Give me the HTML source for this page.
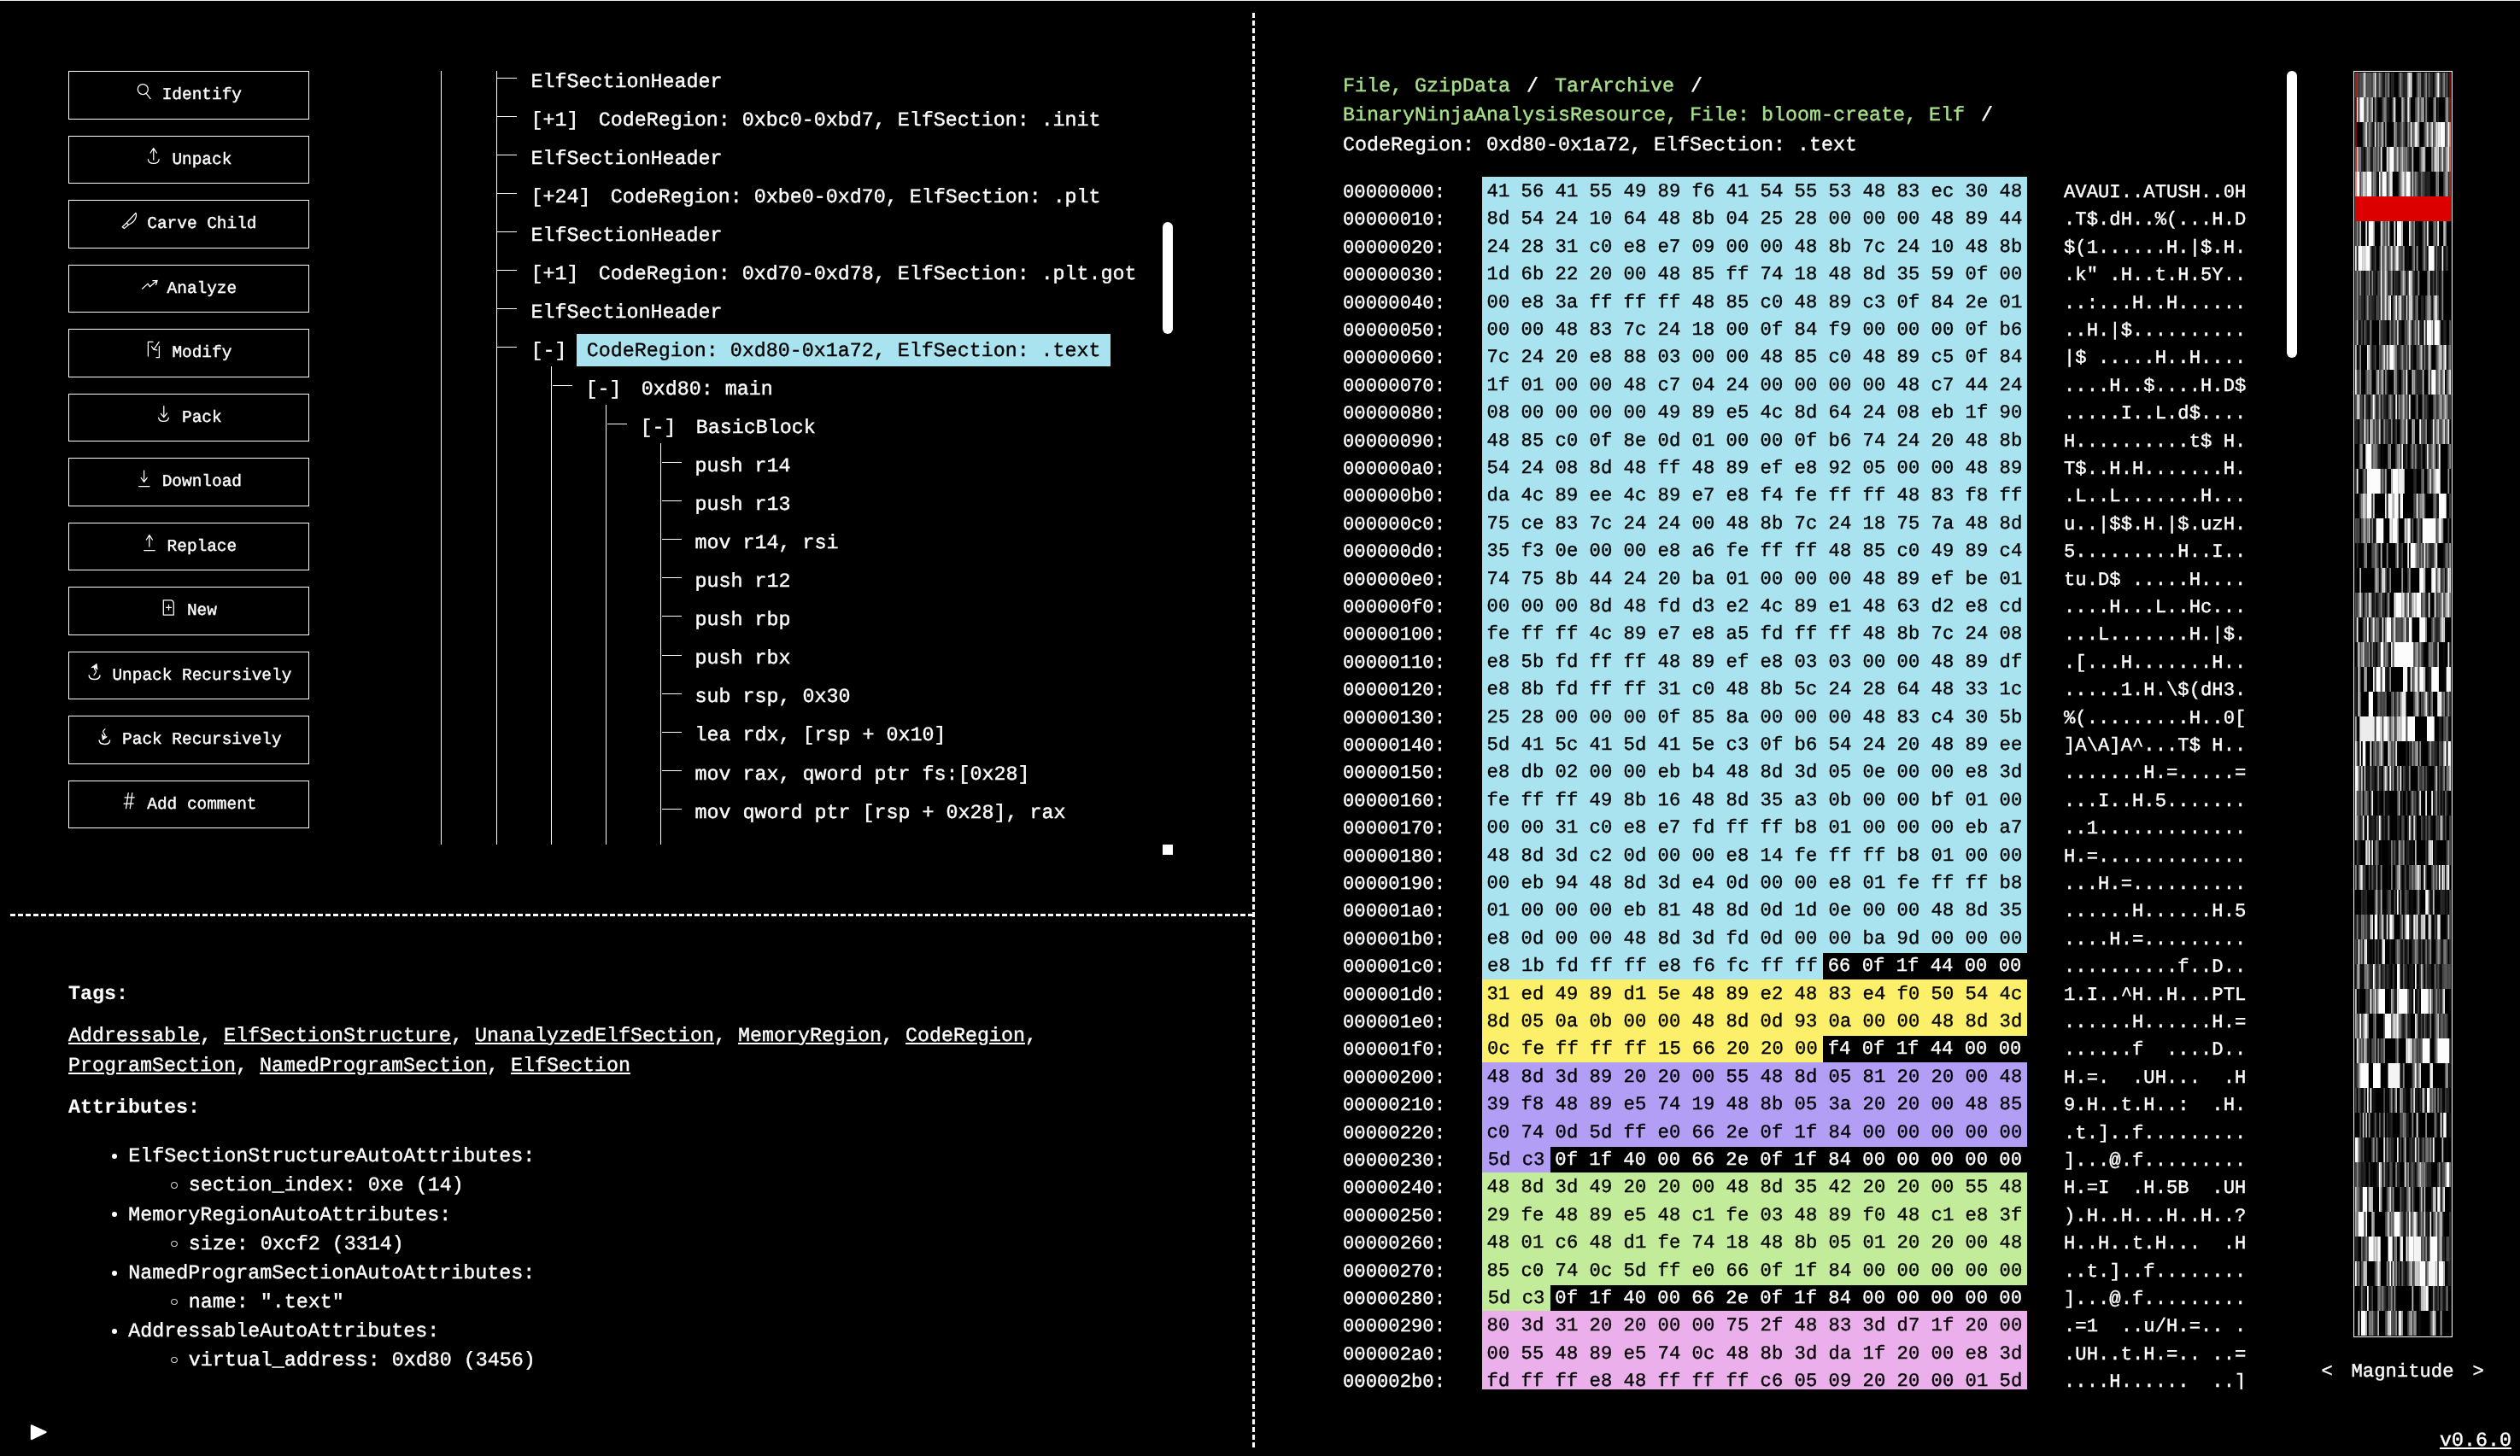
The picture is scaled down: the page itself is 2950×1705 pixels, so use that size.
<!DOCTYPE html>
<html lang="en"><head><meta charset="utf-8"><title>OFRAK</title>
<style>
html,body{margin:0;padding:0;background:#000;}
body{width:2950px;height:1705px;position:relative;overflow:hidden;color:#fff;
 font-family:"Liberation Mono","DejaVu Sans Mono",monospace;font-size:23.33px;
 text-rendering:geometricPrecision;-webkit-font-smoothing:antialiased;-webkit-text-stroke:0.38px;}
.abs{position:absolute;}
#topline{left:0;top:0;width:2950px;height:1px;background:#f2f2f2;}
#vdash{left:1466px;top:15px;width:3px;height:1680px;
 background:repeating-linear-gradient(to bottom,#fff 0,#fff 6px,transparent 6px,transparent 9px);}
#hdash{left:12px;top:1070px;width:1457px;height:3px;
 background:repeating-linear-gradient(to right,#fff 0,#fff 6px,transparent 6px,transparent 9px);}
.btn{position:absolute;left:80px;width:282px;height:57px;box-sizing:border-box;border:1px solid #fff;
 font-size:19.44px;line-height:55px;white-space:pre;display:flex;justify-content:center;align-items:flex-start;}
.btn svg{flex:none;margin-right:11.67px;overflow:visible;position:relative;top:-4.5px}
.btn span{display:block;position:relative;top:-0.5px;left:0.8px}
.btn svg{margin-top:17.5px}
svg.ic{fill:none;stroke:#fff;stroke-width:1.25;stroke-linecap:round;stroke-linejoin:round;}
#tree{left:516px;top:83px;width:860px;height:906px;overflow:hidden;}
.vl{position:absolute;width:1px;background:#fff;}
.tk{position:absolute;height:1px;width:23px;background:#fff;}
.tr{position:absolute;white-space:pre;line-height:45px;height:45px;}
.sel{position:absolute;background:#a8e3ef;color:#000;height:37.5px;line-height:42px;padding:0 11.67px;white-space:pre;overflow:hidden;}
.sb{position:absolute;background:#fff;border-radius:6px;}
#info{left:80px;top:1130px;width:1340px;}
#info .h{font-weight:bold;position:absolute;left:0;white-space:pre;-webkit-text-stroke:0.1px;}
#info .t{position:absolute;left:0;white-space:pre;}
#info u{text-decoration:underline;text-decoration-thickness:2px;text-underline-offset:2px;}
.li{position:absolute;white-space:pre;}
#crumb{left:1572px;top:85px;white-space:pre;line-height:34.4px;}
#crumb .g{color:#a8e08a;}
#crumb i{font-style:normal;margin:0 5px;}
#hex{left:1560px;top:207px;width:1100px;height:1420px;overflow:hidden;font-size:22.22px;}
.hr{position:absolute;left:0;height:32.4px;line-height:32.4px;white-space:pre;width:1100px;}
.hr .a{position:absolute;left:12px;top:3px;}
.hr .b{position:absolute;top:0;width:40px;height:32.5px;text-align:center;color:#fff;box-sizing:border-box;padding-top:4px;line-height:28.4px}
.hr .b.k{color:#000;height:34px;}
.hr .s{position:absolute;left:856px;top:3px;}
.mag{font-size:22.22px;white-space:pre;}
#ver{font-size:23.33px;white-space:pre;text-decoration:underline;text-decoration-thickness:2px;text-underline-offset:1.5px;}
#root{position:absolute;left:0;top:0;width:2950px;height:1705px;will-change:transform;}
</style></head><body><div id="root">
<div id="topline" class="abs"></div>
<div id="vdash" class="abs"></div>
<div id="hdash" class="abs"></div>
<div class="btn" style="top:83px;height:57px"><svg class="ic" width="17.5" height="20" viewBox="0 0 17.5 20"><circle cx="7.3" cy="7.5" r="6"/><path d="M11 12.2 L16.1 18.6"/></svg><span>Identify</span></div>
<div class="btn" style="top:159px;height:56px"><svg class="ic" width="17.5" height="20" viewBox="0 0 17.5 20"><path d="M8.75 14.2V0.6M5.1 6 8.75 0.6 12.4 6M2.4 13.7C2.6 16.8 5 18.4 8.75 18.4 12.5 18.4 14.9 16.8 15.1 13.7"/></svg><span>Unpack</span></div>
<div class="btn" style="top:234px;height:57px"><svg class="ic" width="17.5" height="20" viewBox="0 0 17.5 20"><path d="M1.2 17.8 3.4 19.6 8.5 15.2 6.2 13ZM6.2 13 16.9 1.5 17.4 2.2C17.9 7.6 14.9 12.2 8.5 15.2"/></svg><span>Carve Child</span></div>
<div class="btn" style="top:310px;height:56px"><svg class="ic" width="17.5" height="20" viewBox="0 0 17.5 20"><path d="M0.5 14.2 7.1 8.1 9.5 11.8 18.1 4.3M12.9 4.6 18.1 4.3 16.7 9.4"/></svg><span>Analyze</span></div>
<div class="btn" style="top:385px;height:57px"><svg class="ic" width="17.5" height="20" viewBox="0 0 17.5 20"><path d="M2.4 18V1.4H8M11.9 19.5H15.4V6.5M15.2 1.4 9 10.3M6.6 6.8 9 10.3 12.8 10.8"/></svg><span>Modify</span></div>
<div class="btn" style="top:461px;height:56px"><svg class="ic" width="17.5" height="20" viewBox="0 0 17.5 20"><path d="M8.8 0.6V13.6M5.4 9.3 8.8 13.6 12.5 8.9M2.7 14.1C2.9 17 5.2 18.4 8.5 18.4 11.8 18.4 14.1 17 14.3 14.1"/></svg><span>Pack</span></div>
<div class="btn" style="top:536px;height:57px"><svg class="ic" width="17.5" height="20" viewBox="0 0 17.5 20"><path d="M8.6 1.2V14.4M5.1 9.5 8.6 14.4 12.2 9.5M2.6 19.6H15"/></svg><span>Download</span></div>
<div class="btn" style="top:612px;height:56px"><svg class="ic" width="17.5" height="20" viewBox="0 0 17.5 20"><path d="M8.85 14V0.7M5.4 6 8.85 0.7 12.5 6M2.7 18.5H15.2"/></svg><span>Replace</span></div>
<div class="btn" style="top:687px;height:57px"><svg class="ic" width="17.5" height="20" viewBox="0 0 17.5 20"><path d="M2.3 19.1V1.85H11.4C13.2 2.2 14.2 3.7 14.3 5.8V19.1ZM5.5 10.3H11.5M8.5 7.3V13.3"/></svg><span>New</span></div>
<div class="btn" style="top:763px;height:56px"><svg class="ic" width="17.5" height="20" viewBox="0 0 17.5 20"><path d="M9 13.6C9.6 12.4 11.3 11 11.5 9.5 11.7 8 9.4 6.9 9.4 5.3 9.4 3.8 11 2.2 12 0.8"/><path d="M6.2 4.5 12 0.7 13.1 7 9.6 4.6Z" fill="#fff" stroke-width="0.8"/><path d="M3.2 13.9C3.4 17 5.8 18.45 9.6 18.45 13.4 18.45 15.8 17 16 13.9" stroke-width="1.45"/></svg><span>Unpack Recursively</span></div>
<div class="btn" style="top:838px;height:57px"><svg class="ic" width="17.5" height="20" viewBox="0 0 17.5 20"><path d="M9.9 1.7C9.2 2.9 7.7 3.6 7.7 4.9 7.7 6.4 10 7.6 10.1 9.3 10.2 10.8 8.5 12.6 7.4 14.2"/><path d="M6.4 8.1 7.3 14.4 12.3 10.7 9.3 11Z" fill="#fff" stroke-width="0.8"/><path d="M3.15 14.9C3.3 17.9 5.6 19.4 9.4 19.4 13.2 19.4 15.5 17.9 15.6 14.9" stroke-width="1.45"/></svg><span>Pack Recursively</span></div>
<div class="btn" style="top:914px;height:56px"><svg class="ic" width="17.5" height="20" viewBox="0 0 17.5 20"><path d="M8.2 0.6 5.6 18.6M12.8 0.6 10.3 18.6M4.1 5.85H15.3M3 13.1H14.2"/></svg><span>Add comment</span></div>
<div id="tree" class="abs">
<div class="vl" style="left:0px;top:0px;height:906px"></div><div class="vl" style="left:65px;top:0px;height:906px"></div><div class="vl" style="left:129px;top:346px;height:560px"></div><div class="vl" style="left:193px;top:391px;height:515px"></div><div class="vl" style="left:257px;top:436px;height:470px"></div><div class="tk" style="left:66px;top:8px"></div><div class="tr" style="left:105.5px;top:-8px">ElfSectionHeader</div>
<div class="tk" style="left:66px;top:53px"></div><div class="tr" style="left:105.5px;top:37px">[+1]</div><div class="tr" style="left:184.66999999999996px;top:37px">CodeRegion: 0xbc0-0xbd7, ElfSection: .init</div>
<div class="tk" style="left:66px;top:98px"></div><div class="tr" style="left:105.5px;top:82px">ElfSectionHeader</div>
<div class="tk" style="left:66px;top:143px"></div><div class="tr" style="left:105.5px;top:127px">[+24]</div><div class="tr" style="left:198.66999999999996px;top:127px">CodeRegion: 0xbe0-0xd70, ElfSection: .plt</div>
<div class="tk" style="left:66px;top:188px"></div><div class="tr" style="left:105.5px;top:172px">ElfSectionHeader</div>
<div class="tk" style="left:66px;top:233px"></div><div class="tr" style="left:105.5px;top:217px">[+1]</div><div class="tr" style="left:184.66999999999996px;top:217px">CodeRegion: 0xd70-0xd78, ElfSection: .plt.got</div>
<div class="tk" style="left:66px;top:278px"></div><div class="tr" style="left:105.5px;top:262px">ElfSectionHeader</div>
<div class="tk" style="left:66px;top:323px"></div><div class="tr" style="left:105.5px;top:307px">[-]</div><div class="sel" style="left:159.0px;top:308.2px">CodeRegion: 0xd80-0x1a72, ElfSection: .text</div>
<div class="tk" style="left:131px;top:368px"></div><div class="tr" style="left:169.5px;top:352px">[-]</div><div class="tr" style="left:234.66999999999996px;top:352px">0xd80: main</div>
<div class="tk" style="left:195px;top:413px"></div><div class="tr" style="left:233.5px;top:397px">[-]</div><div class="tr" style="left:298.66999999999996px;top:397px">BasicBlock</div>
<div class="tk" style="left:259px;top:458px"></div><div class="tr" style="left:297.5px;top:442px">push r14</div>
<div class="tk" style="left:259px;top:503px"></div><div class="tr" style="left:297.5px;top:487px">push r13</div>
<div class="tk" style="left:259px;top:548px"></div><div class="tr" style="left:297.5px;top:532px">mov r14, rsi</div>
<div class="tk" style="left:259px;top:593px"></div><div class="tr" style="left:297.5px;top:577px">push r12</div>
<div class="tk" style="left:259px;top:638px"></div><div class="tr" style="left:297.5px;top:622px">push rbp</div>
<div class="tk" style="left:259px;top:684px"></div><div class="tr" style="left:297.5px;top:667px">push rbx</div>
<div class="tk" style="left:259px;top:729px"></div><div class="tr" style="left:297.5px;top:712px">sub rsp, 0x30</div>
<div class="tk" style="left:259px;top:774px"></div><div class="tr" style="left:297.5px;top:757px">lea rdx, [rsp + 0x10]</div>
<div class="tk" style="left:259px;top:819px"></div><div class="tr" style="left:297.5px;top:803px">mov rax, qword ptr fs:[0x28]</div>
<div class="tk" style="left:259px;top:864px"></div><div class="tr" style="left:297.5px;top:848px">mov qword ptr [rsp + 0x28], rax</div>
</div>
<div class="sb" style="left:1361px;top:260px;width:12px;height:131px"></div>
<div class="abs" style="left:1361px;top:989px;width:12px;height:12px;background:#fff"></div>
<div id="info" class="abs">
<div class="h" style="top:22px">Tags:</div>
<div class="t" style="top:70.5px"><u>Addressable</u>, <u>ElfSectionStructure</u>, <u>UnanalyzedElfSection</u>, <u>MemoryRegion</u>, <u>CodeRegion</u>,</div>
<div class="t" style="top:105.5px"><u>ProgramSection</u>, <u>NamedProgramSection</u>, <u>ElfSection</u></div>
<div class="h" style="top:155px">Attributes:</div>
<div class="abs" style="left:51px;top:221.2px;width:6px;height:6px;border-radius:50%;background:#fff"></div><div class="li" style="left:70.19999999999999px;top:212.3px">ElfSectionStructureAutoAttributes:</div>
<div class="abs" style="left:120.3px;top:254.2px;width:7.5px;height:7.5px;box-sizing:border-box;border-radius:50%;border:1.2px solid #fff"></div><div class="li" style="left:140.7px;top:246.4px">section_index: 0xe (14)</div>
<div class="abs" style="left:51px;top:289.4px;width:6px;height:6px;border-radius:50%;background:#fff"></div><div class="li" style="left:70.19999999999999px;top:280.5px">MemoryRegionAutoAttributes:</div>
<div class="abs" style="left:120.3px;top:322.5px;width:7.5px;height:7.5px;box-sizing:border-box;border-radius:50%;border:1.2px solid #fff"></div><div class="li" style="left:140.7px;top:314.6px">size: 0xcf2 (3314)</div>
<div class="abs" style="left:51px;top:357.6px;width:6px;height:6px;border-radius:50%;background:#fff"></div><div class="li" style="left:70.19999999999999px;top:348.7px">NamedProgramSectionAutoAttributes:</div>
<div class="abs" style="left:120.3px;top:390.7px;width:7.5px;height:7.5px;box-sizing:border-box;border-radius:50%;border:1.2px solid #fff"></div><div class="li" style="left:140.7px;top:382.8px">name: &quot;.text&quot;</div>
<div class="abs" style="left:51px;top:425.8px;width:6px;height:6px;border-radius:50%;background:#fff"></div><div class="li" style="left:70.19999999999999px;top:416.9px">AddressableAutoAttributes:</div>
<div class="abs" style="left:120.3px;top:458.8px;width:7.5px;height:7.5px;box-sizing:border-box;border-radius:50%;border:1.2px solid #fff"></div><div class="li" style="left:140.7px;top:451.0px">virtual_address: 0xd80 (3456)</div>
</div>
<svg class="abs" style="left:34px;top:1666px" width="24" height="22" viewBox="0 0 24 22"><path d="M3 3.5 L19.5 11 L3 19 Z" fill="#fff" stroke="#fff" stroke-width="2.4" stroke-linejoin="round"/></svg>
<div id="crumb" class="abs"><span class="g">File, GzipData</span> <i>/</i> <span class="g">TarArchive</span> <i>/</i>
<span class="g">BinaryNinjaAnalysisResource, File: bloom-create, Elf</span> <i>/</i>
CodeRegion: 0xd80-0x1a72, ElfSection: .text</div>
<div id="hex" class="abs">
<div class="hr" style="top:0.0px"><span class="a">00000000:</span><span class="b k" style="left:175.0px;width:637.9px;background:#a8e3ef">41 56 41 55 49 89 f6 41 54 55 53 48 83 ec 30 48</span><span class="s">AVAUI..ATUSH..0H</span></div>
<div class="hr" style="top:32.4px"><span class="a">00000010:</span><span class="b k" style="left:175.0px;width:637.9px;background:#a8e3ef">8d 54 24 10 64 48 8b 04 25 28 00 00 00 48 89 44</span><span class="s">.T$.dH..%(...H.D</span></div>
<div class="hr" style="top:64.8px"><span class="a">00000020:</span><span class="b k" style="left:175.0px;width:637.9px;background:#a8e3ef">24 28 31 c0 e8 e7 09 00 00 48 8b 7c 24 10 48 8b</span><span class="s">$(1......H.|$.H.</span></div>
<div class="hr" style="top:97.2px"><span class="a">00000030:</span><span class="b k" style="left:175.0px;width:637.9px;background:#a8e3ef">1d 6b 22 20 00 48 85 ff 74 18 48 8d 35 59 0f 00</span><span class="s">.k&quot; .H..t.H.5Y..</span></div>
<div class="hr" style="top:129.6px"><span class="a">00000040:</span><span class="b k" style="left:175.0px;width:637.9px;background:#a8e3ef">00 e8 3a ff ff ff 48 85 c0 48 89 c3 0f 84 2e 01</span><span class="s">..:...H..H......</span></div>
<div class="hr" style="top:162.0px"><span class="a">00000050:</span><span class="b k" style="left:175.0px;width:637.9px;background:#a8e3ef">00 00 48 83 7c 24 18 00 0f 84 f9 00 00 00 0f b6</span><span class="s">..H.|$..........</span></div>
<div class="hr" style="top:194.4px"><span class="a">00000060:</span><span class="b k" style="left:175.0px;width:637.9px;background:#a8e3ef">7c 24 20 e8 88 03 00 00 48 85 c0 48 89 c5 0f 84</span><span class="s">|$ .....H..H....</span></div>
<div class="hr" style="top:226.8px"><span class="a">00000070:</span><span class="b k" style="left:175.0px;width:637.9px;background:#a8e3ef">1f 01 00 00 48 c7 04 24 00 00 00 00 48 c7 44 24</span><span class="s">....H..$....H.D$</span></div>
<div class="hr" style="top:259.2px"><span class="a">00000080:</span><span class="b k" style="left:175.0px;width:637.9px;background:#a8e3ef">08 00 00 00 00 49 89 e5 4c 8d 64 24 08 eb 1f 90</span><span class="s">.....I..L.d$....</span></div>
<div class="hr" style="top:291.6px"><span class="a">00000090:</span><span class="b k" style="left:175.0px;width:637.9px;background:#a8e3ef">48 85 c0 0f 8e 0d 01 00 00 0f b6 74 24 20 48 8b</span><span class="s">H..........t$ H.</span></div>
<div class="hr" style="top:324.0px"><span class="a">000000a0:</span><span class="b k" style="left:175.0px;width:637.9px;background:#a8e3ef">54 24 08 8d 48 ff 48 89 ef e8 92 05 00 00 48 89</span><span class="s">T$..H.H.......H.</span></div>
<div class="hr" style="top:356.4px"><span class="a">000000b0:</span><span class="b k" style="left:175.0px;width:637.9px;background:#a8e3ef">da 4c 89 ee 4c 89 e7 e8 f4 fe ff ff 48 83 f8 ff</span><span class="s">.L..L.......H...</span></div>
<div class="hr" style="top:388.8px"><span class="a">000000c0:</span><span class="b k" style="left:175.0px;width:637.9px;background:#a8e3ef">75 ce 83 7c 24 24 00 48 8b 7c 24 18 75 7a 48 8d</span><span class="s">u..|$$.H.|$.uzH.</span></div>
<div class="hr" style="top:421.2px"><span class="a">000000d0:</span><span class="b k" style="left:175.0px;width:637.9px;background:#a8e3ef">35 f3 0e 00 00 e8 a6 fe ff ff 48 85 c0 49 89 c4</span><span class="s">5.........H..I..</span></div>
<div class="hr" style="top:453.6px"><span class="a">000000e0:</span><span class="b k" style="left:175.0px;width:637.9px;background:#a8e3ef">74 75 8b 44 24 20 ba 01 00 00 00 48 89 ef be 01</span><span class="s">tu.D$ .....H....</span></div>
<div class="hr" style="top:486.0px"><span class="a">000000f0:</span><span class="b k" style="left:175.0px;width:637.9px;background:#a8e3ef">00 00 00 8d 48 fd d3 e2 4c 89 e1 48 63 d2 e8 cd</span><span class="s">....H...L..Hc...</span></div>
<div class="hr" style="top:518.4px"><span class="a">00000100:</span><span class="b k" style="left:175.0px;width:637.9px;background:#a8e3ef">fe ff ff 4c 89 e7 e8 a5 fd ff ff 48 8b 7c 24 08</span><span class="s">...L.......H.|$.</span></div>
<div class="hr" style="top:550.8px"><span class="a">00000110:</span><span class="b k" style="left:175.0px;width:637.9px;background:#a8e3ef">e8 5b fd ff ff 48 89 ef e8 03 03 00 00 48 89 df</span><span class="s">.[...H.......H..</span></div>
<div class="hr" style="top:583.2px"><span class="a">00000120:</span><span class="b k" style="left:175.0px;width:637.9px;background:#a8e3ef">e8 8b fd ff ff 31 c0 48 8b 5c 24 28 64 48 33 1c</span><span class="s">.....1.H.\$(dH3.</span></div>
<div class="hr" style="top:615.6px"><span class="a">00000130:</span><span class="b k" style="left:175.0px;width:637.9px;background:#a8e3ef">25 28 00 00 00 0f 85 8a 00 00 00 48 83 c4 30 5b</span><span class="s">%(.........H..0[</span></div>
<div class="hr" style="top:648.0px"><span class="a">00000140:</span><span class="b k" style="left:175.0px;width:637.9px;background:#a8e3ef">5d 41 5c 41 5d 41 5e c3 0f b6 54 24 20 48 89 ee</span><span class="s">]A\A]A^...T$ H..</span></div>
<div class="hr" style="top:680.4px"><span class="a">00000150:</span><span class="b k" style="left:175.0px;width:637.9px;background:#a8e3ef">e8 db 02 00 00 eb b4 48 8d 3d 05 0e 00 00 e8 3d</span><span class="s">.......H.=.....=</span></div>
<div class="hr" style="top:712.8px"><span class="a">00000160:</span><span class="b k" style="left:175.0px;width:637.9px;background:#a8e3ef">fe ff ff 49 8b 16 48 8d 35 a3 0b 00 00 bf 01 00</span><span class="s">...I..H.5.......</span></div>
<div class="hr" style="top:745.2px"><span class="a">00000170:</span><span class="b k" style="left:175.0px;width:637.9px;background:#a8e3ef">00 00 31 c0 e8 e7 fd ff ff b8 01 00 00 00 eb a7</span><span class="s">..1.............</span></div>
<div class="hr" style="top:777.6px"><span class="a">00000180:</span><span class="b k" style="left:175.0px;width:637.9px;background:#a8e3ef">48 8d 3d c2 0d 00 00 e8 14 fe ff ff b8 01 00 00</span><span class="s">H.=.............</span></div>
<div class="hr" style="top:810.0px"><span class="a">00000190:</span><span class="b k" style="left:175.0px;width:637.9px;background:#a8e3ef">00 eb 94 48 8d 3d e4 0d 00 00 e8 01 fe ff ff b8</span><span class="s">...H.=..........</span></div>
<div class="hr" style="top:842.4px"><span class="a">000001a0:</span><span class="b k" style="left:175.0px;width:637.9px;background:#a8e3ef">01 00 00 00 eb 81 48 8d 0d 1d 0e 00 00 48 8d 35</span><span class="s">......H......H.5</span></div>
<div class="hr" style="top:874.8px"><span class="a">000001b0:</span><span class="b k" style="left:175.0px;width:637.9px;background:#a8e3ef">e8 0d 00 00 48 8d 3d fd 0d 00 00 ba 9d 00 00 00</span><span class="s">....H.=.........</span></div>
<div class="hr" style="top:907.2px"><span class="a">000001c0:</span><span class="b k" style="left:175.0px;width:398.8px;background:#a8e3ef">e8 1b fd ff ff e8 f6 fc ff ff</span><span class="b" style="left:573.5px;width:239.1px">66 0f 1f 44 00 00</span><span class="s">..........f..D..</span></div>
<div class="hr" style="top:939.6px"><span class="a">000001d0:</span><span class="b k" style="left:175.0px;width:637.9px;background:#fcef69">31 ed 49 89 d1 5e 48 89 e2 48 83 e4 f0 50 54 4c</span><span class="s">1.I..^H..H...PTL</span></div>
<div class="hr" style="top:972.0px"><span class="a">000001e0:</span><span class="b k" style="left:175.0px;width:637.9px;background:#fcef69">8d 05 0a 0b 00 00 48 8d 0d 93 0a 00 00 48 8d 3d</span><span class="s">......H......H.=</span></div>
<div class="hr" style="top:1004.4px"><span class="a">000001f0:</span><span class="b k" style="left:175.0px;width:398.8px;background:#fcef69">0c fe ff ff ff 15 66 20 20 00</span><span class="b" style="left:573.5px;width:239.1px">f4 0f 1f 44 00 00</span><span class="s">......f  ....D..</span></div>
<div class="hr" style="top:1036.8px"><span class="a">00000200:</span><span class="b k" style="left:175.0px;width:637.9px;background:#b39ef5">48 8d 3d 89 20 20 00 55 48 8d 05 81 20 20 00 48</span><span class="s">H.=.  .UH...  .H</span></div>
<div class="hr" style="top:1069.2px"><span class="a">00000210:</span><span class="b k" style="left:175.0px;width:637.9px;background:#b39ef5">39 f8 48 89 e5 74 19 48 8b 05 3a 20 20 00 48 85</span><span class="s">9.H..t.H..:  .H.</span></div>
<div class="hr" style="top:1101.6px"><span class="a">00000220:</span><span class="b k" style="left:175.0px;width:637.9px;background:#b39ef5">c0 74 0d 5d ff e0 66 2e 0f 1f 84 00 00 00 00 00</span><span class="s">.t.]..f.........</span></div>
<div class="hr" style="top:1134.0px"><span class="a">00000230:</span><span class="b k" style="left:175.0px;width:80.0px;background:#b39ef5">5d c3</span><span class="b" style="left:254.7px;width:557.9px">0f 1f 40 00 66 2e 0f 1f 84 00 00 00 00 00</span><span class="s">]...@.f.........</span></div>
<div class="hr" style="top:1166.4px"><span class="a">00000240:</span><span class="b k" style="left:175.0px;width:637.9px;background:#c3ec9a">48 8d 3d 49 20 20 00 48 8d 35 42 20 20 00 55 48</span><span class="s">H.=I  .H.5B  .UH</span></div>
<div class="hr" style="top:1198.8px"><span class="a">00000250:</span><span class="b k" style="left:175.0px;width:637.9px;background:#c3ec9a">29 fe 48 89 e5 48 c1 fe 03 48 89 f0 48 c1 e8 3f</span><span class="s">).H..H...H..H..?</span></div>
<div class="hr" style="top:1231.2px"><span class="a">00000260:</span><span class="b k" style="left:175.0px;width:637.9px;background:#c3ec9a">48 01 c6 48 d1 fe 74 18 48 8b 05 01 20 20 00 48</span><span class="s">H..H..t.H...  .H</span></div>
<div class="hr" style="top:1263.6px"><span class="a">00000270:</span><span class="b k" style="left:175.0px;width:637.9px;background:#c3ec9a">85 c0 74 0c 5d ff e0 66 0f 1f 84 00 00 00 00 00</span><span class="s">..t.]..f........</span></div>
<div class="hr" style="top:1296.0px"><span class="a">00000280:</span><span class="b k" style="left:175.0px;width:80.0px;background:#c3ec9a">5d c3</span><span class="b" style="left:254.7px;width:557.9px">0f 1f 40 00 66 2e 0f 1f 84 00 00 00 00 00</span><span class="s">]...@.f.........</span></div>
<div class="hr" style="top:1328.4px"><span class="a">00000290:</span><span class="b k" style="left:175.0px;width:637.9px;background:#ebb0eb">80 3d 31 20 20 00 00 75 2f 48 83 3d d7 1f 20 00</span><span class="s">.=1  ..u/H.=.. .</span></div>
<div class="hr" style="top:1360.8px"><span class="a">000002a0:</span><span class="b k" style="left:175.0px;width:637.9px;background:#ebb0eb">00 55 48 89 e5 74 0c 48 8b 3d da 1f 20 00 e8 3d</span><span class="s">.UH..t.H.=.. ..=</span></div>
<div class="hr" style="top:1393.2px"><span class="a">000002b0:</span><span class="b k" style="left:175.0px;width:637.9px;background:#ebb0eb">fd ff ff e8 48 ff ff ff c6 05 09 20 20 00 01 5d</span><span class="s">....H......  ..]</span></div>
</div>
<div class="sb" style="left:2677px;top:83px;width:12px;height:336px"></div>
<div class="abs" style="left:2755px;top:83px;width:116px;height:1483px;box-sizing:border-box;border:1px solid #fff"></div>
<svg class="abs" style="left:2757px;top:85px" width="112" height="1479" viewBox="0 0 112 1479">
<path fill="#0c0c0c" d="M66.5 0h1.75v29.0h-1.75zM108.5 0h1.75v29.0h-1.75zM21 29h1.75v29.0h-1.75zM42 29h1.75v29.0h-1.75zM52.5 29h1.75v29.0h-1.75zM80.5 29h1.75v29.0h-1.75zM0 58h1.75v29.0h-1.75zM21 58h1.75v29.0h-1.75zM33.25 58h1.75v29.0h-1.75zM36.75 58h1.75v29.0h-1.75zM43.75 58h1.75v29.0h-1.75zM59.5 58h1.75v29.0h-1.75zM31.5 87h1.75v29.0h-1.75zM26.25 116h1.75v29.0h-1.75zM92.75 116h1.75v29.0h-1.75zM14 145h1.75v29.0h-1.75zM47.25 145h1.75v29.0h-1.75zM73.5 145h1.75v29.0h-1.75zM7 174h1.75v29.0h-1.75zM40.25 174h1.75v29.0h-1.75zM70 174h1.75v29.0h-1.75zM73.5 174h1.75v29.0h-1.75zM85.75 174h1.75v29.0h-1.75zM98 174h1.75v29.0h-1.75zM19.25 203h1.75v29.0h-1.75zM59.5 203h1.75v29.0h-1.75zM61.25 203h1.75v29.0h-1.75zM70 203h1.75v29.0h-1.75zM73.5 203h1.75v29.0h-1.75zM84 203h1.75v29.0h-1.75zM103.25 203h1.75v29.0h-1.75zM59.5 232h1.75v29.0h-1.75zM70 232h1.75v29.0h-1.75zM87.5 232h1.75v29.0h-1.75zM98 232h1.75v29.0h-1.75zM89.25 261h1.75v29.0h-1.75zM98 261h1.75v29.0h-1.75zM3.5 290h1.75v29.0h-1.75zM14 290h1.75v29.0h-1.75zM66.5 290h1.75v29.0h-1.75zM101.5 290h1.75v29.0h-1.75zM1.75 319h1.75v29.0h-1.75zM19.25 319h1.75v29.0h-1.75zM78.75 319h1.75v29.0h-1.75zM7 348h1.75v29.0h-1.75zM33.25 348h1.75v29.0h-1.75zM43.75 348h1.75v29.0h-1.75zM61.25 348h1.75v29.0h-1.75zM45.5 377h1.75v29.0h-1.75zM64.75 377h1.75v29.0h-1.75zM29.75 406h1.75v29.0h-1.75zM61.25 406h1.75v29.0h-1.75zM85.75 406h1.75v29.0h-1.75zM87.5 406h1.75v29.0h-1.75zM3.5 435h1.75v29.0h-1.75zM31.5 435h1.75v29.0h-1.75zM36.75 435h1.75v29.0h-1.75zM56 435h1.75v29.0h-1.75zM73.5 435h1.75v29.0h-1.75zM94.5 435h1.75v29.0h-1.75zM3.5 464h1.75v29.0h-1.75zM36.75 464h1.75v29.0h-1.75zM50.75 493h1.75v29.0h-1.75zM96.25 493h1.75v29.0h-1.75zM17.5 522h1.75v29.0h-1.75zM77 522h1.75v29.0h-1.75zM8.75 551h1.75v29.0h-1.75zM50.75 551h1.75v29.0h-1.75zM0 580h1.75v29.0h-1.75zM28 580h1.75v29.0h-1.75zM36.75 580h1.75v29.0h-1.75zM56 580h1.75v29.0h-1.75zM105 580h1.75v29.0h-1.75zM8.75 609h1.75v29.0h-1.75zM19.25 609h1.75v29.0h-1.75zM84 609h1.75v29.0h-1.75zM87.5 609h1.75v29.0h-1.75zM3.5 638h1.75v29.0h-1.75zM15.75 638h1.75v29.0h-1.75zM29.75 638h1.75v29.0h-1.75zM105 638h1.75v29.0h-1.75zM40.25 667h1.75v29.0h-1.75zM103.25 667h1.75v29.0h-1.75zM15.75 696h1.75v29.0h-1.75zM36.75 696h1.75v29.0h-1.75zM84 696h1.75v29.0h-1.75zM1.75 725h1.75v29.0h-1.75zM85.75 725h1.75v29.0h-1.75zM1.75 754h1.75v29.0h-1.75zM110.25 754h1.75v29.0h-1.75zM49 783h1.75v29.0h-1.75zM73.5 783h1.75v29.0h-1.75zM77 783h1.75v29.0h-1.75zM8.75 812h1.75v29.0h-1.75zM12.25 812h1.75v29.0h-1.75zM38.5 812h1.75v29.0h-1.75zM59.5 812h1.75v29.0h-1.75zM96.25 812h1.75v29.0h-1.75zM105 812h1.75v29.0h-1.75zM21 841h1.75v29.0h-1.75zM28 841h1.75v29.0h-1.75zM35 841h1.75v29.0h-1.75zM38.5 841h1.75v29.0h-1.75zM77 841h1.75v29.0h-1.75zM10.5 870h1.75v29.0h-1.75zM35 870h1.75v29.0h-1.75zM89.25 870h1.75v29.0h-1.75zM103.25 870h1.75v29.0h-1.75zM5.25 899h1.75v29.0h-1.75zM29.75 899h1.75v29.0h-1.75zM38.5 899h1.75v29.0h-1.75zM40.25 899h1.75v29.0h-1.75zM49 899h1.75v29.0h-1.75zM64.75 899h1.75v29.0h-1.75zM84 899h1.75v29.0h-1.75zM1.75 928h1.75v29.0h-1.75zM22.75 928h1.75v29.0h-1.75zM28 928h1.75v29.0h-1.75zM38.5 928h1.75v29.0h-1.75zM56 928h1.75v29.0h-1.75zM61.25 928h1.75v29.0h-1.75zM42 957h1.75v29.0h-1.75zM64.75 957h1.75v29.0h-1.75zM66.5 957h1.75v29.0h-1.75zM75.25 957h1.75v29.0h-1.75zM87.5 957h1.75v29.0h-1.75zM105 957h1.75v29.0h-1.75zM15.75 986h1.75v29.0h-1.75zM33.25 986h1.75v29.0h-1.75zM38.5 986h1.75v29.0h-1.75zM56 986h1.75v29.0h-1.75zM8.75 1015h1.75v29.0h-1.75zM15.75 1015h1.75v29.0h-1.75zM28 1015h1.75v29.0h-1.75zM42 1015h1.75v29.0h-1.75zM57.75 1015h1.75v29.0h-1.75zM5.25 1044h1.75v29.0h-1.75zM40.25 1044h1.75v29.0h-1.75zM45.5 1044h1.75v29.0h-1.75zM52.5 1044h1.75v29.0h-1.75zM73.5 1044h1.75v29.0h-1.75zM40.25 1073h1.75v29.0h-1.75zM70 1073h1.75v29.0h-1.75zM99.75 1073h1.75v29.0h-1.75zM110.25 1073h1.75v29.0h-1.75zM73.5 1102h1.75v29.0h-1.75zM84 1102h1.75v29.0h-1.75zM50.75 1131h1.75v29.0h-1.75zM52.5 1160h1.75v29.0h-1.75zM108.5 1160h1.75v29.0h-1.75zM7 1189h1.75v29.0h-1.75zM22.75 1189h1.75v29.0h-1.75zM36.75 1189h1.75v29.0h-1.75zM50.75 1189h1.75v29.0h-1.75zM77 1189h1.75v29.0h-1.75zM82.25 1189h1.75v29.0h-1.75zM101.5 1189h1.75v29.0h-1.75zM7 1218h1.75v29.0h-1.75zM10.5 1218h1.75v29.0h-1.75zM14 1218h1.75v29.0h-1.75zM17.5 1218h1.75v29.0h-1.75zM21 1218h1.75v29.0h-1.75zM29.75 1218h1.75v29.0h-1.75zM38.5 1218h1.75v29.0h-1.75zM64.75 1218h1.75v29.0h-1.75zM108.5 1218h1.75v29.0h-1.75zM12.25 1247h1.75v29.0h-1.75zM14 1247h1.75v29.0h-1.75zM22.75 1247h1.75v29.0h-1.75zM26.25 1247h1.75v29.0h-1.75zM59.5 1247h1.75v29.0h-1.75zM75.25 1247h1.75v29.0h-1.75zM92.75 1247h1.75v29.0h-1.75zM103.25 1247h1.75v29.0h-1.75zM106.75 1247h1.75v29.0h-1.75zM19.25 1276h1.75v29.0h-1.75zM70 1276h1.75v29.0h-1.75zM64.75 1305h1.75v29.0h-1.75zM99.75 1305h1.75v29.0h-1.75zM110.25 1305h1.75v29.0h-1.75zM14 1334h1.75v29.0h-1.75zM57.75 1334h1.75v29.0h-1.75zM73.5 1334h1.75v29.0h-1.75zM43.75 1363h1.75v29.0h-1.75zM57.75 1392h1.75v29.0h-1.75zM106.75 1392h1.75v29.0h-1.75zM15.75 1421h1.75v29.0h-1.75zM43.75 1421h1.75v29.0h-1.75zM47.25 1421h1.75v29.0h-1.75zM89.25 1421h1.75v29.0h-1.75zM103.25 1421h1.75v29.0h-1.75zM73.5 1450h1.75v29.0h-1.75zM75.25 1450h1.75v29.0h-1.75zM101.5 1450h1.75v29.0h-1.75z"/>
<path fill="#141414" d="M33.25 0h1.75v29.0h-1.75zM78.75 0h1.75v29.0h-1.75zM64.75 145h1.75v29.0h-1.75zM14 174h1.75v29.0h-1.75zM92.75 203h1.75v29.0h-1.75zM36.75 493h1.75v29.0h-1.75zM64.75 522h1.75v29.0h-1.75zM103.25 551h1.75v29.0h-1.75zM45.5 725h1.75v29.0h-1.75zM105 725h1.75v29.0h-1.75zM15.75 812h1.75v29.0h-1.75zM84 812h1.75v29.0h-1.75zM99.75 812h1.75v29.0h-1.75zM36.75 841h1.75v29.0h-1.75zM91 841h1.75v29.0h-1.75zM96.25 841h1.75v29.0h-1.75zM12.25 870h1.75v29.0h-1.75zM15.75 870h1.75v29.0h-1.75zM17.5 870h1.75v29.0h-1.75zM66.5 870h1.75v29.0h-1.75zM80.5 870h1.75v29.0h-1.75zM84 870h1.75v29.0h-1.75zM47.25 899h1.75v29.0h-1.75zM63 899h1.75v29.0h-1.75zM66.5 899h1.75v29.0h-1.75zM94.5 899h1.75v29.0h-1.75zM59.5 928h1.75v29.0h-1.75zM105 928h1.75v29.0h-1.75zM47.25 957h1.75v29.0h-1.75zM35 986h1.75v29.0h-1.75zM66.5 986h1.75v29.0h-1.75zM73.5 986h1.75v29.0h-1.75zM14 1015h1.75v29.0h-1.75zM19.25 1015h1.75v29.0h-1.75zM29.75 1015h1.75v29.0h-1.75zM54.25 1015h1.75v29.0h-1.75zM75.25 1015h1.75v29.0h-1.75zM0 1044h1.75v29.0h-1.75zM7 1044h1.75v29.0h-1.75zM29.75 1044h1.75v29.0h-1.75zM35 1044h1.75v29.0h-1.75zM54.25 1044h1.75v29.0h-1.75zM63 1044h1.75v29.0h-1.75zM56 1102h1.75v29.0h-1.75zM21 1189h1.75v29.0h-1.75zM24.5 1218h1.75v29.0h-1.75zM73.5 1218h1.75v29.0h-1.75zM110.25 1218h1.75v29.0h-1.75zM24.5 1276h1.75v29.0h-1.75zM63 1276h1.75v29.0h-1.75zM99.75 1276h1.75v29.0h-1.75zM5.25 1421h1.75v29.0h-1.75z"/>
<path fill="#1c1c1c" d="M84 0h1.75v29.0h-1.75zM99.75 0h1.75v29.0h-1.75zM38.5 29h1.75v29.0h-1.75zM84 29h1.75v29.0h-1.75zM24.5 58h1.75v29.0h-1.75zM19.25 87h1.75v29.0h-1.75zM82.25 116h1.75v29.0h-1.75zM71.75 174h1.75v29.0h-1.75zM1.75 203h1.75v29.0h-1.75zM21 203h1.75v29.0h-1.75zM105 203h1.75v29.0h-1.75zM38.5 232h1.75v29.0h-1.75zM71.75 232h1.75v29.0h-1.75zM89.25 232h1.75v29.0h-1.75zM99.75 232h1.75v29.0h-1.75zM68.25 261h1.75v29.0h-1.75zM99.75 261h1.75v29.0h-1.75zM5.25 290h1.75v29.0h-1.75zM15.75 290h1.75v29.0h-1.75zM50.75 290h1.75v29.0h-1.75zM75.25 290h1.75v29.0h-1.75zM3.5 319h1.75v29.0h-1.75zM21 319h1.75v29.0h-1.75zM64.75 319h1.75v29.0h-1.75zM24.5 377h1.75v29.0h-1.75zM29.75 377h1.75v29.0h-1.75zM49 377h1.75v29.0h-1.75zM70 377h1.75v29.0h-1.75zM31.5 406h1.75v29.0h-1.75zM40.25 406h1.75v29.0h-1.75zM45.5 406h1.75v29.0h-1.75zM28 435h1.75v29.0h-1.75zM57.75 435h1.75v29.0h-1.75zM75.25 435h1.75v29.0h-1.75zM21 522h1.75v29.0h-1.75zM52.5 551h1.75v29.0h-1.75zM38.5 580h1.75v29.0h-1.75zM21 609h1.75v29.0h-1.75zM33.25 638h1.75v29.0h-1.75zM110.25 667h1.75v29.0h-1.75zM38.5 696h1.75v29.0h-1.75zM64.75 783h1.75v29.0h-1.75zM14 812h1.75v29.0h-1.75zM61.25 812h1.75v29.0h-1.75zM80.5 812h1.75v29.0h-1.75zM36.75 870h1.75v29.0h-1.75zM8.75 957h1.75v29.0h-1.75zM89.25 957h1.75v29.0h-1.75zM5.25 986h1.75v29.0h-1.75zM59.5 1015h1.75v29.0h-1.75zM80.5 1015h1.75v29.0h-1.75zM84 1015h1.75v29.0h-1.75zM101.5 1015h1.75v29.0h-1.75zM24.5 1044h1.75v29.0h-1.75zM64.75 1044h1.75v29.0h-1.75zM71.75 1073h1.75v29.0h-1.75zM91 1073h1.75v29.0h-1.75zM61.25 1102h1.75v29.0h-1.75zM75.25 1102h1.75v29.0h-1.75zM85.75 1102h1.75v29.0h-1.75zM54.25 1160h1.75v29.0h-1.75zM110.25 1160h1.75v29.0h-1.75zM8.75 1189h1.75v29.0h-1.75zM70 1189h1.75v29.0h-1.75zM98 1189h1.75v29.0h-1.75zM31.5 1218h1.75v29.0h-1.75zM40.25 1218h1.75v29.0h-1.75zM61.25 1218h1.75v29.0h-1.75zM101.5 1218h1.75v29.0h-1.75zM35 1247h1.75v29.0h-1.75zM63 1247h1.75v29.0h-1.75zM71.75 1247h1.75v29.0h-1.75zM77 1247h1.75v29.0h-1.75zM7 1276h1.75v29.0h-1.75zM68.25 1305h1.75v29.0h-1.75zM82.25 1334h1.75v29.0h-1.75zM49 1392h1.75v29.0h-1.75zM59.5 1392h1.75v29.0h-1.75zM17.5 1421h1.75v29.0h-1.75zM94.5 1421h1.75v29.0h-1.75zM105 1421h1.75v29.0h-1.75z"/>
<path fill="#242424" d="M31.5 0h1.75v29.0h-1.75zM42 0h1.75v29.0h-1.75zM56 0h1.75v29.0h-1.75zM77 0h1.75v29.0h-1.75zM87.5 0h1.75v29.0h-1.75zM89.25 0h1.75v29.0h-1.75zM36.75 29h1.75v29.0h-1.75zM57.75 29h1.75v29.0h-1.75zM59.5 29h1.75v29.0h-1.75zM96.25 29h1.75v29.0h-1.75zM110.25 29h1.75v29.0h-1.75zM19.25 58h1.75v29.0h-1.75zM49 58h1.75v29.0h-1.75zM50.75 58h1.75v29.0h-1.75zM57.75 58h1.75v29.0h-1.75zM7 87h1.75v29.0h-1.75zM8.75 87h1.75v29.0h-1.75zM17.5 87h1.75v29.0h-1.75zM63 87h1.75v29.0h-1.75zM64.75 87h1.75v29.0h-1.75zM24.5 116h1.75v29.0h-1.75zM73.5 116h1.75v29.0h-1.75zM84 116h1.75v29.0h-1.75zM19.25 145h1.75v29.0h-1.75zM21 145h1.75v29.0h-1.75zM96.25 203h1.75v29.0h-1.75zM98 203h1.75v29.0h-1.75zM7 232h1.75v29.0h-1.75zM8.75 232h1.75v29.0h-1.75zM21 232h1.75v29.0h-1.75zM22.75 232h1.75v29.0h-1.75zM47.25 232h1.75v29.0h-1.75zM49 232h1.75v29.0h-1.75zM7 261h1.75v29.0h-1.75zM8.75 261h1.75v29.0h-1.75zM19.25 261h1.75v29.0h-1.75zM21 261h1.75v29.0h-1.75zM77 261h1.75v29.0h-1.75zM78.75 261h1.75v29.0h-1.75zM33.25 290h1.75v29.0h-1.75zM35 290h1.75v29.0h-1.75zM52.5 290h1.75v29.0h-1.75zM77 290h1.75v29.0h-1.75zM103.25 290h1.75v29.0h-1.75zM105 290h1.75v29.0h-1.75zM49 319h1.75v29.0h-1.75zM50.75 319h1.75v29.0h-1.75zM57.75 319h1.75v29.0h-1.75zM66.5 319h1.75v29.0h-1.75zM82.25 319h1.75v29.0h-1.75zM84 319h1.75v29.0h-1.75zM49 348h1.75v29.0h-1.75zM71.75 348h1.75v29.0h-1.75zM73.5 348h1.75v29.0h-1.75zM75.25 348h1.75v29.0h-1.75zM77 348h1.75v29.0h-1.75zM12.25 377h1.75v29.0h-1.75zM14 377h1.75v29.0h-1.75zM33.25 377h1.75v29.0h-1.75zM35 377h1.75v29.0h-1.75zM43.75 377h1.75v29.0h-1.75zM84 377h1.75v29.0h-1.75zM0 406h1.75v29.0h-1.75zM1.75 406h1.75v29.0h-1.75zM38.5 406h1.75v29.0h-1.75zM26.25 435h1.75v29.0h-1.75zM71.75 435h1.75v29.0h-1.75zM68.25 464h1.75v29.0h-1.75zM26.25 551h1.75v29.0h-1.75zM87.5 551h1.75v29.0h-1.75zM31.5 609h1.75v29.0h-1.75zM33.25 609h1.75v29.0h-1.75zM82.25 609h1.75v29.0h-1.75zM28 638h1.75v29.0h-1.75zM94.5 638h1.75v29.0h-1.75zM21 667h1.75v29.0h-1.75zM22.75 667h1.75v29.0h-1.75zM38.5 667h1.75v29.0h-1.75zM78.75 667h1.75v29.0h-1.75zM92.75 667h1.75v29.0h-1.75zM94.5 667h1.75v29.0h-1.75zM0 696h1.75v29.0h-1.75zM85.75 696h1.75v29.0h-1.75zM87.5 696h1.75v29.0h-1.75zM0 725h1.75v29.0h-1.75zM98 754h1.75v29.0h-1.75zM99.75 754h1.75v29.0h-1.75zM108.5 754h1.75v29.0h-1.75zM59.5 783h1.75v29.0h-1.75zM92.75 783h1.75v29.0h-1.75zM94.5 783h1.75v29.0h-1.75zM19.25 812h1.75v29.0h-1.75zM21 812h1.75v29.0h-1.75zM24.5 812h1.75v29.0h-1.75zM28 812h1.75v29.0h-1.75zM29.75 812h1.75v29.0h-1.75zM47.25 812h1.75v29.0h-1.75zM50.75 812h1.75v29.0h-1.75zM26.25 841h1.75v29.0h-1.75zM54.25 841h1.75v29.0h-1.75zM106.75 841h1.75v29.0h-1.75zM5.25 870h1.75v29.0h-1.75zM19.25 870h1.75v29.0h-1.75zM21 870h1.75v29.0h-1.75zM49 870h1.75v29.0h-1.75zM50.75 870h1.75v29.0h-1.75zM78.75 870h1.75v29.0h-1.75zM87.5 870h1.75v29.0h-1.75zM98 870h1.75v29.0h-1.75zM3.5 899h1.75v29.0h-1.75zM43.75 899h1.75v29.0h-1.75zM59.5 899h1.75v29.0h-1.75zM92.75 899h1.75v29.0h-1.75zM21 928h1.75v29.0h-1.75zM78.75 928h1.75v29.0h-1.75zM96.25 928h1.75v29.0h-1.75zM10.5 957h1.75v29.0h-1.75zM26.25 957h1.75v29.0h-1.75zM28 957h1.75v29.0h-1.75zM36.75 957h1.75v29.0h-1.75zM61.25 957h1.75v29.0h-1.75zM101.5 957h1.75v29.0h-1.75zM103.25 957h1.75v29.0h-1.75zM106.75 957h1.75v29.0h-1.75zM0 986h1.75v29.0h-1.75zM3.5 986h1.75v29.0h-1.75zM64.75 986h1.75v29.0h-1.75zM94.5 986h1.75v29.0h-1.75zM106.75 986h1.75v29.0h-1.75zM1.75 1015h1.75v29.0h-1.75zM40.25 1015h1.75v29.0h-1.75zM52.5 1015h1.75v29.0h-1.75zM73.5 1015h1.75v29.0h-1.75zM99.75 1015h1.75v29.0h-1.75zM17.5 1044h1.75v29.0h-1.75zM19.25 1044h1.75v29.0h-1.75zM38.5 1044h1.75v29.0h-1.75zM57.75 1044h1.75v29.0h-1.75zM59.5 1044h1.75v29.0h-1.75zM66.5 1044h1.75v29.0h-1.75zM84 1044h1.75v29.0h-1.75zM85.75 1044h1.75v29.0h-1.75zM87.5 1044h1.75v29.0h-1.75zM98 1044h1.75v29.0h-1.75zM3.5 1073h1.75v29.0h-1.75zM45.5 1073h1.75v29.0h-1.75zM47.25 1073h1.75v29.0h-1.75zM63 1073h1.75v29.0h-1.75zM64.75 1073h1.75v29.0h-1.75zM54.25 1102h1.75v29.0h-1.75zM63 1102h1.75v29.0h-1.75zM14 1131h1.75v29.0h-1.75zM15.75 1131h1.75v29.0h-1.75zM28 1131h1.75v29.0h-1.75zM110.25 1131h1.75v29.0h-1.75zM0 1160h1.75v29.0h-1.75zM56 1189h1.75v29.0h-1.75zM57.75 1189h1.75v29.0h-1.75zM71.75 1189h1.75v29.0h-1.75zM75.25 1189h1.75v29.0h-1.75zM106.75 1189h1.75v29.0h-1.75zM108.5 1189h1.75v29.0h-1.75zM42 1218h1.75v29.0h-1.75zM59.5 1218h1.75v29.0h-1.75zM7 1247h1.75v29.0h-1.75zM42 1247h1.75v29.0h-1.75zM43.75 1247h1.75v29.0h-1.75zM66.5 1247h1.75v29.0h-1.75zM80.5 1247h1.75v29.0h-1.75zM8.75 1276h1.75v29.0h-1.75zM35 1276h1.75v29.0h-1.75zM36.75 1276h1.75v29.0h-1.75zM49 1276h1.75v29.0h-1.75zM50.75 1276h1.75v29.0h-1.75zM84 1276h1.75v29.0h-1.75zM85.75 1276h1.75v29.0h-1.75zM87.5 1276h1.75v29.0h-1.75zM5.25 1305h1.75v29.0h-1.75zM7 1305h1.75v29.0h-1.75zM54.25 1305h1.75v29.0h-1.75zM56 1305h1.75v29.0h-1.75zM56 1334h1.75v29.0h-1.75zM84 1334h1.75v29.0h-1.75zM0 1363h1.75v29.0h-1.75zM1.75 1363h1.75v29.0h-1.75zM84 1363h1.75v29.0h-1.75zM85.75 1363h1.75v29.0h-1.75zM101.5 1363h1.75v29.0h-1.75zM103.25 1363h1.75v29.0h-1.75zM108.5 1392h1.75v29.0h-1.75zM110.25 1392h1.75v29.0h-1.75zM8.75 1421h1.75v29.0h-1.75zM10.5 1421h1.75v29.0h-1.75zM35 1421h1.75v29.0h-1.75zM22.75 1450h1.75v29.0h-1.75zM24.5 1450h1.75v29.0h-1.75z"/>
<path fill="#2c2c2c" d="M43.75 0h1.75v29.0h-1.75zM57.75 0h1.75v29.0h-1.75zM24.5 29h1.75v29.0h-1.75zM75.25 116h1.75v29.0h-1.75zM85.75 116h1.75v29.0h-1.75zM68.25 232h1.75v29.0h-1.75zM96.25 232h1.75v29.0h-1.75zM28 261h1.75v29.0h-1.75zM12.25 290h1.75v29.0h-1.75zM42 290h1.75v29.0h-1.75zM36.75 348h1.75v29.0h-1.75zM8.75 406h1.75v29.0h-1.75zM70 464h1.75v29.0h-1.75zM1.75 551h1.75v29.0h-1.75zM89.25 551h1.75v29.0h-1.75zM96.25 638h1.75v29.0h-1.75zM35 696h1.75v29.0h-1.75zM101.5 783h1.75v29.0h-1.75zM57.75 812h1.75v29.0h-1.75zM33.25 870h1.75v29.0h-1.75zM61.25 899h1.75v29.0h-1.75zM12.25 957h1.75v29.0h-1.75zM14 986h1.75v29.0h-1.75zM94.5 1044h1.75v29.0h-1.75zM15.75 1073h1.75v29.0h-1.75zM82.25 1102h1.75v29.0h-1.75zM5.25 1189h1.75v29.0h-1.75zM36.75 1218h1.75v29.0h-1.75zM68.25 1247h1.75v29.0h-1.75zM10.5 1276h1.75v29.0h-1.75zM68.25 1276h1.75v29.0h-1.75zM8.75 1363h1.75v29.0h-1.75zM110.25 1363h1.75v29.0h-1.75zM56 1392h1.75v29.0h-1.75zM92.75 1421h1.75v29.0h-1.75zM101.5 1421h1.75v29.0h-1.75z"/>
<path fill="#343434" d="M24.5 0h1.75v29.0h-1.75zM59.5 0h1.75v29.0h-1.75zM105 0h1.75v29.0h-1.75zM28 87h1.75v29.0h-1.75zM64.75 116h1.75v29.0h-1.75zM80.5 116h1.75v29.0h-1.75zM108.5 116h1.75v29.0h-1.75zM70 145h1.75v29.0h-1.75zM87.5 145h1.75v29.0h-1.75zM82.25 174h1.75v29.0h-1.75zM28 203h1.75v29.0h-1.75zM15.75 261h1.75v29.0h-1.75zM31.5 290h1.75v29.0h-1.75zM61.25 377h1.75v29.0h-1.75zM80.5 377h1.75v29.0h-1.75zM108.5 377h1.75v29.0h-1.75zM89.25 406h1.75v29.0h-1.75zM52.5 435h1.75v29.0h-1.75zM82.25 435h1.75v29.0h-1.75zM0 464h1.75v29.0h-1.75zM33.25 464h1.75v29.0h-1.75zM19.25 493h1.75v29.0h-1.75zM78.75 551h1.75v29.0h-1.75zM91 551h1.75v29.0h-1.75zM108.5 551h1.75v29.0h-1.75zM26.25 609h1.75v29.0h-1.75zM0 638h1.75v29.0h-1.75zM59.5 638h1.75v29.0h-1.75zM98 638h1.75v29.0h-1.75zM1.75 667h1.75v29.0h-1.75zM50.75 725h1.75v29.0h-1.75zM110.25 725h1.75v29.0h-1.75zM89.25 783h1.75v29.0h-1.75zM77 812h1.75v29.0h-1.75zM17.5 841h1.75v29.0h-1.75zM101.5 841h1.75v29.0h-1.75zM61.25 870h1.75v29.0h-1.75zM82.25 899h1.75v29.0h-1.75zM82.25 928h1.75v29.0h-1.75zM7 957h1.75v29.0h-1.75zM99.75 957h1.75v29.0h-1.75zM75.25 986h1.75v29.0h-1.75zM66.5 1015h1.75v29.0h-1.75zM110.25 1015h1.75v29.0h-1.75zM31.5 1044h1.75v29.0h-1.75zM36.75 1044h1.75v29.0h-1.75zM75.25 1044h1.75v29.0h-1.75zM96.25 1073h1.75v29.0h-1.75zM98 1102h1.75v29.0h-1.75zM38.5 1247h1.75v29.0h-1.75zM89.25 1247h1.75v29.0h-1.75zM5.25 1276h1.75v29.0h-1.75zM14 1305h1.75v29.0h-1.75zM89.25 1305h1.75v29.0h-1.75zM110.25 1334h1.75v29.0h-1.75zM42 1392h1.75v29.0h-1.75zM33.25 1421h1.75v29.0h-1.75zM75.25 1421h1.75v29.0h-1.75z"/>
<path fill="#3c3c3c" d="M3.5 29h1.75v29.0h-1.75zM43.75 145h1.75v29.0h-1.75zM54.25 145h1.75v29.0h-1.75zM3.5 174h1.75v29.0h-1.75zM36.75 174h1.75v29.0h-1.75zM94.5 174h1.75v29.0h-1.75zM82.25 203h1.75v29.0h-1.75zM3.5 232h1.75v29.0h-1.75zM28 232h1.75v29.0h-1.75zM45.5 232h1.75v29.0h-1.75zM3.5 261h1.75v29.0h-1.75zM54.25 261h1.75v29.0h-1.75zM29.75 290h1.75v29.0h-1.75zM47.25 290h1.75v29.0h-1.75zM71.75 290h1.75v29.0h-1.75zM82.25 290h1.75v29.0h-1.75zM61.25 319h1.75v29.0h-1.75zM57.75 348h1.75v29.0h-1.75zM87.5 348h1.75v29.0h-1.75zM5.25 377h1.75v29.0h-1.75zM94.5 377h1.75v29.0h-1.75zM24.5 406h1.75v29.0h-1.75zM35 406h1.75v29.0h-1.75zM57.75 406h1.75v29.0h-1.75zM68.25 435h1.75v29.0h-1.75zM12.25 464h1.75v29.0h-1.75zM70 493h1.75v29.0h-1.75zM94.5 493h1.75v29.0h-1.75zM75.25 522h1.75v29.0h-1.75zM99.75 580h1.75v29.0h-1.75zM14 609h1.75v29.0h-1.75zM94.5 609h1.75v29.0h-1.75zM12.25 638h1.75v29.0h-1.75zM28 667h1.75v29.0h-1.75zM5.25 696h1.75v29.0h-1.75zM22.75 696h1.75v29.0h-1.75zM22.75 754h1.75v29.0h-1.75zM45.5 783h1.75v29.0h-1.75zM5.25 812h1.75v29.0h-1.75zM75.25 812h1.75v29.0h-1.75zM101.5 812h1.75v29.0h-1.75zM68.25 841h1.75v29.0h-1.75zM73.5 841h1.75v29.0h-1.75zM7 870h1.75v29.0h-1.75zM26.25 870h1.75v29.0h-1.75zM26.25 899h1.75v29.0h-1.75zM8.75 928h1.75v29.0h-1.75zM92.75 928h1.75v29.0h-1.75zM26.25 1015h1.75v29.0h-1.75zM43.75 1044h1.75v29.0h-1.75zM8.75 1131h1.75v29.0h-1.75zM66.5 1189h1.75v29.0h-1.75zM105 1189h1.75v29.0h-1.75zM94.5 1218h1.75v29.0h-1.75zM56 1247h1.75v29.0h-1.75zM15.75 1276h1.75v29.0h-1.75zM26.25 1276h1.75v29.0h-1.75zM96.25 1276h1.75v29.0h-1.75zM10.5 1334h1.75v29.0h-1.75zM78.75 1334h1.75v29.0h-1.75zM14 1363h1.75v29.0h-1.75zM80.5 1363h1.75v29.0h-1.75z"/>
<path fill="#444444" d="M0 0h1.75v29.0h-1.75zM3.5 0h1.75v29.0h-1.75zM12.25 0h1.75v29.0h-1.75zM54.25 0h1.75v29.0h-1.75zM108.5 29h1.75v29.0h-1.75zM61.25 87h1.75v29.0h-1.75zM1.75 145h1.75v29.0h-1.75zM5.25 145h1.75v29.0h-1.75zM8.75 145h1.75v29.0h-1.75zM22.75 203h1.75v29.0h-1.75zM106.75 203h1.75v29.0h-1.75zM91 232h1.75v29.0h-1.75zM17.5 261h1.75v29.0h-1.75zM7 290h1.75v29.0h-1.75zM22.75 319h1.75v29.0h-1.75zM82.25 377h1.75v29.0h-1.75zM110.25 377h1.75v29.0h-1.75zM47.25 406h1.75v29.0h-1.75zM59.5 435h1.75v29.0h-1.75zM77 435h1.75v29.0h-1.75zM110.25 493h1.75v29.0h-1.75zM1.75 522h1.75v29.0h-1.75zM54.25 551h1.75v29.0h-1.75zM85.75 551h1.75v29.0h-1.75zM22.75 609h1.75v29.0h-1.75zM47.25 638h1.75v29.0h-1.75zM92.75 638h1.75v29.0h-1.75zM91 667h1.75v29.0h-1.75zM29.75 725h1.75v29.0h-1.75zM33.25 725h1.75v29.0h-1.75zM91 783h1.75v29.0h-1.75zM59.5 841h1.75v29.0h-1.75zM56 870h1.75v29.0h-1.75zM1.75 899h1.75v29.0h-1.75zM61.25 1015h1.75v29.0h-1.75zM15.75 1044h1.75v29.0h-1.75zM101.5 1044h1.75v29.0h-1.75zM73.5 1073h1.75v29.0h-1.75zM77 1102h1.75v29.0h-1.75zM103.25 1102h1.75v29.0h-1.75zM106.75 1102h1.75v29.0h-1.75zM71.75 1131h1.75v29.0h-1.75zM75.25 1131h1.75v29.0h-1.75zM0 1189h1.75v29.0h-1.75zM40.25 1247h1.75v29.0h-1.75zM64.75 1247h1.75v29.0h-1.75zM82.25 1276h1.75v29.0h-1.75zM50.75 1392h1.75v29.0h-1.75zM19.25 1421h1.75v29.0h-1.75zM96.25 1421h1.75v29.0h-1.75zM21 1450h1.75v29.0h-1.75z"/>
<path fill="#4c4c4c" d="M7 0h1.75v29.0h-1.75zM19.25 0h1.75v29.0h-1.75zM26.25 0h1.75v29.0h-1.75zM36.75 0h1.75v29.0h-1.75zM50.75 0h1.75v29.0h-1.75zM71.75 0h1.75v29.0h-1.75zM80.5 0h1.75v29.0h-1.75zM92.75 0h1.75v29.0h-1.75zM101.5 0h1.75v29.0h-1.75zM10.5 29h1.75v29.0h-1.75zM15.75 29h1.75v29.0h-1.75zM31.5 29h1.75v29.0h-1.75zM70 29h1.75v29.0h-1.75zM75.25 29h1.75v29.0h-1.75zM91 29h1.75v29.0h-1.75zM105 29h1.75v29.0h-1.75zM8.75 58h1.75v29.0h-1.75zM14 58h1.75v29.0h-1.75zM28 58h1.75v29.0h-1.75zM52.5 58h1.75v29.0h-1.75zM63 58h1.75v29.0h-1.75zM66.5 58h1.75v29.0h-1.75zM80.5 58h1.75v29.0h-1.75zM85.75 58h1.75v29.0h-1.75zM91 58h1.75v29.0h-1.75zM105 58h1.75v29.0h-1.75zM12.25 87h1.75v29.0h-1.75zM24.5 87h1.75v29.0h-1.75zM45.5 87h1.75v29.0h-1.75zM50.75 87h1.75v29.0h-1.75zM75.25 87h1.75v29.0h-1.75zM91 87h1.75v29.0h-1.75zM98 87h1.75v29.0h-1.75zM103.25 87h1.75v29.0h-1.75zM5.25 116h1.75v29.0h-1.75zM19.25 116h1.75v29.0h-1.75zM36.75 116h1.75v29.0h-1.75zM50.75 116h1.75v29.0h-1.75zM68.25 116h1.75v29.0h-1.75zM78.75 116h1.75v29.0h-1.75zM103.25 116h1.75v29.0h-1.75zM22.75 145h1.75v29.0h-1.75zM40.25 145h1.75v29.0h-1.75zM61.25 145h1.75v29.0h-1.75zM66.5 145h1.75v29.0h-1.75zM0 174h1.75v29.0h-1.75zM33.25 174h1.75v29.0h-1.75zM66.5 174h1.75v29.0h-1.75zM78.75 174h1.75v29.0h-1.75zM91 174h1.75v29.0h-1.75zM31.5 203h1.75v29.0h-1.75zM38.5 203h1.75v29.0h-1.75zM43.75 203h1.75v29.0h-1.75zM54.25 203h1.75v29.0h-1.75zM66.5 203h1.75v29.0h-1.75zM78.75 203h1.75v29.0h-1.75zM0 232h1.75v29.0h-1.75zM14 232h1.75v29.0h-1.75zM26.25 232h1.75v29.0h-1.75zM31.5 232h1.75v29.0h-1.75zM40.25 232h1.75v29.0h-1.75zM52.5 232h1.75v29.0h-1.75zM0 261h1.75v29.0h-1.75zM5.25 261h1.75v29.0h-1.75zM12.25 261h1.75v29.0h-1.75zM26.25 261h1.75v29.0h-1.75zM31.5 261h1.75v29.0h-1.75zM36.75 261h1.75v29.0h-1.75zM43.75 261h1.75v29.0h-1.75zM49 261h1.75v29.0h-1.75zM56 261h1.75v29.0h-1.75zM61.25 261h1.75v29.0h-1.75zM70 261h1.75v29.0h-1.75zM82.25 261h1.75v29.0h-1.75zM43.75 290h1.75v29.0h-1.75zM59.5 290h1.75v29.0h-1.75zM68.25 290h1.75v29.0h-1.75zM91 290h1.75v29.0h-1.75zM29.75 319h1.75v29.0h-1.75zM52.5 319h1.75v29.0h-1.75zM73.5 319h1.75v29.0h-1.75zM94.5 319h1.75v29.0h-1.75zM101.5 319h1.75v29.0h-1.75zM108.5 319h1.75v29.0h-1.75zM3.5 348h1.75v29.0h-1.75zM12.25 348h1.75v29.0h-1.75zM28 348h1.75v29.0h-1.75zM54.25 348h1.75v29.0h-1.75zM70 348h1.75v29.0h-1.75zM94.5 348h1.75v29.0h-1.75zM99.75 348h1.75v29.0h-1.75zM106.75 348h1.75v29.0h-1.75zM0 377h1.75v29.0h-1.75zM7 377h1.75v29.0h-1.75zM17.5 377h1.75v29.0h-1.75zM26.25 377h1.75v29.0h-1.75zM38.5 377h1.75v29.0h-1.75zM52.5 377h1.75v29.0h-1.75zM57.75 377h1.75v29.0h-1.75zM91 377h1.75v29.0h-1.75zM96.25 377h1.75v29.0h-1.75zM101.5 377h1.75v29.0h-1.75zM7 406h1.75v29.0h-1.75zM12.25 406h1.75v29.0h-1.75zM21 406h1.75v29.0h-1.75zM36.75 406h1.75v29.0h-1.75zM52.5 406h1.75v29.0h-1.75zM80.5 406h1.75v29.0h-1.75zM92.75 406h1.75v29.0h-1.75zM99.75 406h1.75v29.0h-1.75zM105 406h1.75v29.0h-1.75zM19.25 435h1.75v29.0h-1.75zM47.25 435h1.75v29.0h-1.75zM64.75 435h1.75v29.0h-1.75zM85.75 435h1.75v29.0h-1.75zM87.5 435h1.75v29.0h-1.75zM108.5 435h1.75v29.0h-1.75zM8.75 464h1.75v29.0h-1.75zM29.75 464h1.75v29.0h-1.75zM77 464h1.75v29.0h-1.75zM84 464h1.75v29.0h-1.75zM89.25 464h1.75v29.0h-1.75zM5.25 493h1.75v29.0h-1.75zM68.25 493h1.75v29.0h-1.75zM73.5 493h1.75v29.0h-1.75zM91 493h1.75v29.0h-1.75zM7 522h1.75v29.0h-1.75zM12.25 522h1.75v29.0h-1.75zM71.75 522h1.75v29.0h-1.75zM94.5 522h1.75v29.0h-1.75zM108.5 522h1.75v29.0h-1.75zM19.25 551h1.75v29.0h-1.75zM21 551h1.75v29.0h-1.75zM75.25 551h1.75v29.0h-1.75zM82.25 551h1.75v29.0h-1.75zM105 551h1.75v29.0h-1.75zM61.25 580h1.75v29.0h-1.75zM94.5 580h1.75v29.0h-1.75zM101.5 580h1.75v29.0h-1.75zM1.75 609h1.75v29.0h-1.75zM10.5 609h1.75v29.0h-1.75zM28 609h1.75v29.0h-1.75zM36.75 609h1.75v29.0h-1.75zM57.75 609h1.75v29.0h-1.75zM63 609h1.75v29.0h-1.75zM77 609h1.75v29.0h-1.75zM98 609h1.75v29.0h-1.75zM103.25 609h1.75v29.0h-1.75zM8.75 638h1.75v29.0h-1.75zM17.5 638h1.75v29.0h-1.75zM22.75 638h1.75v29.0h-1.75zM42 638h1.75v29.0h-1.75zM54.25 638h1.75v29.0h-1.75zM61.25 638h1.75v29.0h-1.75zM89.25 638h1.75v29.0h-1.75zM5.25 667h1.75v29.0h-1.75zM14 667h1.75v29.0h-1.75zM26.25 667h1.75v29.0h-1.75zM33.25 667h1.75v29.0h-1.75zM68.25 667h1.75v29.0h-1.75zM73.5 667h1.75v29.0h-1.75zM29.75 696h1.75v29.0h-1.75zM66.5 696h1.75v29.0h-1.75zM73.5 696h1.75v29.0h-1.75zM42 725h1.75v29.0h-1.75zM47.25 725h1.75v29.0h-1.75zM68.25 725h1.75v29.0h-1.75zM78.75 725h1.75v29.0h-1.75zM87.5 725h1.75v29.0h-1.75zM101.5 725h1.75v29.0h-1.75zM106.75 725h1.75v29.0h-1.75zM31.5 754h1.75v29.0h-1.75zM40.25 754h1.75v29.0h-1.75zM45.5 754h1.75v29.0h-1.75zM59.5 754h1.75v29.0h-1.75zM105 754h1.75v29.0h-1.75zM21 783h1.75v29.0h-1.75zM26.25 783h1.75v29.0h-1.75zM42 783h1.75v29.0h-1.75zM63 783h1.75v29.0h-1.75zM68.25 783h1.75v29.0h-1.75zM85.75 783h1.75v29.0h-1.75zM99.75 783h1.75v29.0h-1.75zM42 812h1.75v29.0h-1.75zM56 812h1.75v29.0h-1.75zM82.25 812h1.75v29.0h-1.75zM98 812h1.75v29.0h-1.75zM5.25 841h1.75v29.0h-1.75zM14 841h1.75v29.0h-1.75zM33.25 841h1.75v29.0h-1.75zM49 841h1.75v29.0h-1.75zM64.75 841h1.75v29.0h-1.75zM70 841h1.75v29.0h-1.75zM92.75 841h1.75v29.0h-1.75zM98 841h1.75v29.0h-1.75zM3.5 870h1.75v29.0h-1.75zM24.5 870h1.75v29.0h-1.75zM29.75 870h1.75v29.0h-1.75zM54.25 870h1.75v29.0h-1.75zM64.75 870h1.75v29.0h-1.75zM77 870h1.75v29.0h-1.75zM82.25 870h1.75v29.0h-1.75zM96.25 870h1.75v29.0h-1.75zM105 870h1.75v29.0h-1.75zM110.25 870h1.75v29.0h-1.75zM22.75 899h1.75v29.0h-1.75zM54.25 899h1.75v29.0h-1.75zM106.75 899h1.75v29.0h-1.75zM110.25 899h1.75v29.0h-1.75zM3.5 928h1.75v29.0h-1.75zM10.5 928h1.75v29.0h-1.75zM15.75 928h1.75v29.0h-1.75zM47.25 928h1.75v29.0h-1.75zM52.5 928h1.75v29.0h-1.75zM57.75 928h1.75v29.0h-1.75zM64.75 928h1.75v29.0h-1.75zM68.25 928h1.75v29.0h-1.75zM89.25 928h1.75v29.0h-1.75zM38.5 957h1.75v29.0h-1.75zM40.25 957h1.75v29.0h-1.75zM45.5 957h1.75v29.0h-1.75zM59.5 957h1.75v29.0h-1.75zM71.75 957h1.75v29.0h-1.75zM110.25 957h1.75v29.0h-1.75zM10.5 986h1.75v29.0h-1.75zM28 986h1.75v29.0h-1.75zM52.5 986h1.75v29.0h-1.75zM63 986h1.75v29.0h-1.75zM92.75 986h1.75v29.0h-1.75zM110.25 986h1.75v29.0h-1.75zM0 1015h1.75v29.0h-1.75zM5.25 1015h1.75v29.0h-1.75zM22.75 1015h1.75v29.0h-1.75zM47.25 1015h1.75v29.0h-1.75zM56 1015h1.75v29.0h-1.75zM68.25 1015h1.75v29.0h-1.75zM77 1015h1.75v29.0h-1.75zM85.75 1015h1.75v29.0h-1.75zM94.5 1015h1.75v29.0h-1.75zM106.75 1015h1.75v29.0h-1.75zM26.25 1044h1.75v29.0h-1.75zM33.25 1044h1.75v29.0h-1.75zM78.75 1044h1.75v29.0h-1.75zM96.25 1044h1.75v29.0h-1.75zM108.5 1044h1.75v29.0h-1.75zM110.25 1044h1.75v29.0h-1.75zM12.25 1073h1.75v29.0h-1.75zM14 1073h1.75v29.0h-1.75zM19.25 1073h1.75v29.0h-1.75zM24.5 1073h1.75v29.0h-1.75zM92.75 1073h1.75v29.0h-1.75zM3.5 1102h1.75v29.0h-1.75zM7 1102h1.75v29.0h-1.75zM21 1102h1.75v29.0h-1.75zM57.75 1102h1.75v29.0h-1.75zM92.75 1102h1.75v29.0h-1.75zM5.25 1131h1.75v29.0h-1.75zM21 1131h1.75v29.0h-1.75zM31.5 1131h1.75v29.0h-1.75zM47.25 1131h1.75v29.0h-1.75zM66.5 1131h1.75v29.0h-1.75zM92.75 1131h1.75v29.0h-1.75zM1.75 1160h1.75v29.0h-1.75zM66.5 1160h1.75v29.0h-1.75zM71.75 1160h1.75v29.0h-1.75zM33.25 1189h1.75v29.0h-1.75zM40.25 1189h1.75v29.0h-1.75zM45.5 1189h1.75v29.0h-1.75zM87.5 1189h1.75v29.0h-1.75zM91 1189h1.75v29.0h-1.75zM99.75 1189h1.75v29.0h-1.75zM5.25 1218h1.75v29.0h-1.75zM54.25 1218h1.75v29.0h-1.75zM5.25 1247h1.75v29.0h-1.75zM8.75 1247h1.75v29.0h-1.75zM19.25 1247h1.75v29.0h-1.75zM52.5 1247h1.75v29.0h-1.75zM85.75 1247h1.75v29.0h-1.75zM0 1276h1.75v29.0h-1.75zM3.5 1276h1.75v29.0h-1.75zM42 1276h1.75v29.0h-1.75zM59.5 1276h1.75v29.0h-1.75zM64.75 1276h1.75v29.0h-1.75zM71.75 1276h1.75v29.0h-1.75zM101.5 1276h1.75v29.0h-1.75zM103.25 1276h1.75v29.0h-1.75zM36.75 1305h1.75v29.0h-1.75zM42 1305h1.75v29.0h-1.75zM59.5 1305h1.75v29.0h-1.75zM75.25 1305h1.75v29.0h-1.75zM35 1334h1.75v29.0h-1.75zM40.25 1334h1.75v29.0h-1.75zM61.25 1334h1.75v29.0h-1.75zM64.75 1334h1.75v29.0h-1.75zM75.25 1334h1.75v29.0h-1.75zM91 1334h1.75v29.0h-1.75zM96.25 1334h1.75v29.0h-1.75zM101.5 1334h1.75v29.0h-1.75zM10.5 1363h1.75v29.0h-1.75zM77 1363h1.75v29.0h-1.75zM96.25 1363h1.75v29.0h-1.75zM108.5 1363h1.75v29.0h-1.75zM1.75 1392h1.75v29.0h-1.75zM7 1392h1.75v29.0h-1.75zM22.75 1392h1.75v29.0h-1.75zM38.5 1392h1.75v29.0h-1.75zM45.5 1392h1.75v29.0h-1.75zM61.25 1392h1.75v29.0h-1.75zM66.5 1392h1.75v29.0h-1.75zM82.25 1392h1.75v29.0h-1.75zM96.25 1392h1.75v29.0h-1.75zM29.75 1421h1.75v29.0h-1.75zM40.25 1421h1.75v29.0h-1.75zM35 1450h1.75v29.0h-1.75zM45.5 1450h1.75v29.0h-1.75zM61.25 1450h1.75v29.0h-1.75zM66.5 1450h1.75v29.0h-1.75zM87.5 1450h1.75v29.0h-1.75z"/>
<path fill="#545454" d="M1.75 0h1.75v29.0h-1.75zM5.25 0h1.75v29.0h-1.75zM14 0h1.75v29.0h-1.75zM15.75 0h1.75v29.0h-1.75zM17.5 0h1.75v29.0h-1.75zM29.75 0h1.75v29.0h-1.75zM56 58h1.75v29.0h-1.75zM17.5 145h1.75v29.0h-1.75zM50.75 203h1.75v29.0h-1.75zM52.5 203h1.75v29.0h-1.75zM12.25 232h1.75v29.0h-1.75zM24.5 261h1.75v29.0h-1.75zM57.75 290h1.75v29.0h-1.75zM28 319h1.75v29.0h-1.75zM56 319h1.75v29.0h-1.75zM71.75 319h1.75v29.0h-1.75zM1.75 348h1.75v29.0h-1.75zM5.25 406h1.75v29.0h-1.75zM77 406h1.75v29.0h-1.75zM78.75 406h1.75v29.0h-1.75zM0 522h1.75v29.0h-1.75zM3.5 522h1.75v29.0h-1.75zM0 609h1.75v29.0h-1.75zM49 638h1.75v29.0h-1.75zM50.75 638h1.75v29.0h-1.75zM52.5 638h1.75v29.0h-1.75zM12.25 667h1.75v29.0h-1.75zM77 667h1.75v29.0h-1.75zM77 725h1.75v29.0h-1.75zM103.25 754h1.75v29.0h-1.75zM24.5 783h1.75v29.0h-1.75zM98 783h1.75v29.0h-1.75zM1.75 841h1.75v29.0h-1.75zM3.5 841h1.75v29.0h-1.75zM94.5 870h1.75v29.0h-1.75zM19.25 928h1.75v29.0h-1.75zM63 928h1.75v29.0h-1.75zM57.75 957h1.75v29.0h-1.75zM103.25 1044h1.75v29.0h-1.75zM105 1044h1.75v29.0h-1.75zM106.75 1044h1.75v29.0h-1.75zM19.25 1131h1.75v29.0h-1.75zM29.75 1131h1.75v29.0h-1.75zM40.25 1276h1.75v29.0h-1.75zM54.25 1334h1.75v29.0h-1.75zM106.75 1363h1.75v29.0h-1.75zM38.5 1421h1.75v29.0h-1.75zM42 1450h1.75v29.0h-1.75zM43.75 1450h1.75v29.0h-1.75z"/>
<path fill="#5c5c5c" d="M106.75 0h1.75v29.0h-1.75zM29.75 116h1.75v29.0h-1.75zM71.75 116h1.75v29.0h-1.75zM110.25 116h1.75v29.0h-1.75zM0 145h1.75v29.0h-1.75zM3.5 145h1.75v29.0h-1.75zM7 145h1.75v29.0h-1.75zM10.5 145h1.75v29.0h-1.75zM36.75 203h1.75v29.0h-1.75zM61.25 232h1.75v29.0h-1.75zM84 232h1.75v29.0h-1.75zM91 261h1.75v29.0h-1.75zM0 290h1.75v29.0h-1.75zM110.25 290h1.75v29.0h-1.75zM35 319h1.75v29.0h-1.75zM26.25 406h1.75v29.0h-1.75zM98 406h1.75v29.0h-1.75zM96.25 435h1.75v29.0h-1.75zM80.5 493h1.75v29.0h-1.75zM47.25 551h1.75v29.0h-1.75zM29.75 580h1.75v29.0h-1.75zM106.75 580h1.75v29.0h-1.75zM96.25 609h1.75v29.0h-1.75zM10.5 667h1.75v29.0h-1.75zM43.75 667h1.75v29.0h-1.75zM5.25 725h1.75v29.0h-1.75zM26.25 725h1.75v29.0h-1.75zM28 725h1.75v29.0h-1.75zM31.5 725h1.75v29.0h-1.75zM35 725h1.75v29.0h-1.75zM1.75 783h1.75v29.0h-1.75zM92.75 812h1.75v29.0h-1.75zM105 841h1.75v29.0h-1.75zM70 870h1.75v29.0h-1.75zM45.5 899h1.75v29.0h-1.75zM22.75 957h1.75v29.0h-1.75zM82.25 1044h1.75v29.0h-1.75zM98 1073h1.75v29.0h-1.75zM33.25 1102h1.75v29.0h-1.75zM99.75 1102h1.75v29.0h-1.75zM101.5 1102h1.75v29.0h-1.75zM105 1102h1.75v29.0h-1.75zM73.5 1131h1.75v29.0h-1.75zM77 1131h1.75v29.0h-1.75zM105 1160h1.75v29.0h-1.75zM80.5 1189h1.75v29.0h-1.75zM22.75 1218h1.75v29.0h-1.75zM52.5 1218h1.75v29.0h-1.75z"/>
<path fill="#646464" d="M35 0h1.75v29.0h-1.75zM17.5 58h1.75v29.0h-1.75zM105 87h1.75v29.0h-1.75zM77 116h1.75v29.0h-1.75zM17.5 203h1.75v29.0h-1.75zM94.5 203h1.75v29.0h-1.75zM66.5 232h1.75v29.0h-1.75zM94.5 232h1.75v29.0h-1.75zM96.25 261h1.75v29.0h-1.75zM10.5 290h1.75v29.0h-1.75zM17.5 319h1.75v29.0h-1.75zM38.5 319h1.75v29.0h-1.75zM42 377h1.75v29.0h-1.75zM66.5 522h1.75v29.0h-1.75zM35 580h1.75v29.0h-1.75zM64.75 609h1.75v29.0h-1.75zM26.25 638h1.75v29.0h-1.75zM47.25 754h1.75v29.0h-1.75zM17.5 812h1.75v29.0h-1.75zM85.75 870h1.75v29.0h-1.75zM52.5 899h1.75v29.0h-1.75zM85.75 957h1.75v29.0h-1.75zM12.25 986h1.75v29.0h-1.75zM56 1044h1.75v29.0h-1.75zM61.25 1073h1.75v29.0h-1.75zM42 1102h1.75v29.0h-1.75zM80.5 1102h1.75v29.0h-1.75zM3.5 1189h1.75v29.0h-1.75zM28 1218h1.75v29.0h-1.75zM66.5 1276h1.75v29.0h-1.75zM52.5 1305h1.75v29.0h-1.75zM43.75 1334h1.75v29.0h-1.75zM54.25 1392h1.75v29.0h-1.75zM68.25 1392h1.75v29.0h-1.75zM7 1421h1.75v29.0h-1.75zM99.75 1421h1.75v29.0h-1.75z"/>
<path fill="#6c6c6c" d="M85.75 0h1.75v29.0h-1.75zM31.5 377h1.75v29.0h-1.75zM78.75 1247h1.75v29.0h-1.75z"/>
<path fill="#747474" d="M98 0h1.75v29.0h-1.75zM47.25 58h1.75v29.0h-1.75zM0 87h1.75v29.0h-1.75zM21 87h1.75v29.0h-1.75zM56 87h1.75v29.0h-1.75zM57.75 87h1.75v29.0h-1.75zM36.75 232h1.75v29.0h-1.75zM57.75 232h1.75v29.0h-1.75zM66.5 261h1.75v29.0h-1.75zM87.5 261h1.75v29.0h-1.75zM40.25 290h1.75v29.0h-1.75zM64.75 290h1.75v29.0h-1.75zM47.25 319h1.75v29.0h-1.75zM22.75 377h1.75v29.0h-1.75zM92.75 435h1.75v29.0h-1.75zM71.75 551h1.75v29.0h-1.75zM26.25 580h1.75v29.0h-1.75zM103.25 580h1.75v29.0h-1.75zM7 609h1.75v29.0h-1.75zM85.75 667h1.75v29.0h-1.75zM87.5 667h1.75v29.0h-1.75zM73.5 725h1.75v29.0h-1.75zM84 725h1.75v29.0h-1.75zM31.5 783h1.75v29.0h-1.75zM36.75 812h1.75v29.0h-1.75zM78.75 812h1.75v29.0h-1.75zM106.75 812h1.75v29.0h-1.75zM108.5 812h1.75v29.0h-1.75zM10.5 841h1.75v29.0h-1.75zM101.5 870h1.75v29.0h-1.75zM7 986h1.75v29.0h-1.75zM82.25 1015h1.75v29.0h-1.75zM103.25 1015h1.75v29.0h-1.75zM10.5 1044h1.75v29.0h-1.75zM12.25 1044h1.75v29.0h-1.75zM22.75 1044h1.75v29.0h-1.75zM92.75 1044h1.75v29.0h-1.75zM89.25 1073h1.75v29.0h-1.75zM54.25 1189h1.75v29.0h-1.75zM96.25 1189h1.75v29.0h-1.75zM82.25 1247h1.75v29.0h-1.75zM77 1276h1.75v29.0h-1.75zM78.75 1276h1.75v29.0h-1.75zM110.25 1276h1.75v29.0h-1.75zM71.75 1334h1.75v29.0h-1.75zM7 1363h1.75v29.0h-1.75zM26.25 1421h1.75v29.0h-1.75zM15.75 1450h1.75v29.0h-1.75zM17.5 1450h1.75v29.0h-1.75z"/>
<path fill="#7c7c7c" d="M75.25 0h1.75v29.0h-1.75zM35 29h1.75v29.0h-1.75zM56 29h1.75v29.0h-1.75zM5.25 87h1.75v29.0h-1.75zM15.75 87h1.75v29.0h-1.75zM22.75 87h1.75v29.0h-1.75zM22.75 116h1.75v29.0h-1.75zM80.5 319h1.75v29.0h-1.75zM15.75 348h1.75v29.0h-1.75zM47.25 348h1.75v29.0h-1.75zM24.5 435h1.75v29.0h-1.75zM24.5 551h1.75v29.0h-1.75zM73.5 551h1.75v29.0h-1.75zM80.5 609h1.75v29.0h-1.75zM36.75 667h1.75v29.0h-1.75zM12.25 841h1.75v29.0h-1.75zM42 899h1.75v29.0h-1.75zM42 928h1.75v29.0h-1.75zM1.75 986h1.75v29.0h-1.75zM8.75 986h1.75v29.0h-1.75zM50.75 1015h1.75v29.0h-1.75zM71.75 1015h1.75v29.0h-1.75zM98 1015h1.75v29.0h-1.75zM105 1015h1.75v29.0h-1.75zM43.75 1073h1.75v29.0h-1.75zM1.75 1102h1.75v29.0h-1.75zM52.5 1102h1.75v29.0h-1.75zM70 1131h1.75v29.0h-1.75zM57.75 1218h1.75v29.0h-1.75zM84 1247h1.75v29.0h-1.75zM3.5 1305h1.75v29.0h-1.75zM1.75 1334h1.75v29.0h-1.75zM28 1421h1.75v29.0h-1.75z"/>
<path fill="#848484" d="M21 0h1.75v29.0h-1.75zM94.5 0h1.75v29.0h-1.75zM12.25 29h1.75v29.0h-1.75zM22.75 29h1.75v29.0h-1.75zM33.25 29h1.75v29.0h-1.75zM43.75 29h1.75v29.0h-1.75zM71.75 29h1.75v29.0h-1.75zM82.25 29h1.75v29.0h-1.75zM29.75 58h1.75v29.0h-1.75zM106.75 58h1.75v29.0h-1.75zM3.5 87h1.75v29.0h-1.75zM47.25 87h1.75v29.0h-1.75zM94.5 116h1.75v29.0h-1.75zM105 116h1.75v29.0h-1.75zM64.75 174h1.75v29.0h-1.75zM45.5 203h1.75v29.0h-1.75zM19.25 232h1.75v29.0h-1.75zM54.25 232h1.75v29.0h-1.75zM73.5 232h1.75v29.0h-1.75zM101.5 232h1.75v29.0h-1.75zM84 261h1.75v29.0h-1.75zM101.5 261h1.75v29.0h-1.75zM17.5 290h1.75v29.0h-1.75zM28 290h1.75v29.0h-1.75zM45.5 290h1.75v29.0h-1.75zM5.25 319h1.75v29.0h-1.75zM59.5 319h1.75v29.0h-1.75zM96.25 319h1.75v29.0h-1.75zM24.5 348h1.75v29.0h-1.75zM35 348h1.75v29.0h-1.75zM96.25 348h1.75v29.0h-1.75zM19.25 377h1.75v29.0h-1.75zM54.25 377h1.75v29.0h-1.75zM71.75 377h1.75v29.0h-1.75zM98 377h1.75v29.0h-1.75zM42 406h1.75v29.0h-1.75zM106.75 406h1.75v29.0h-1.75zM5.25 435h1.75v29.0h-1.75zM21 435h1.75v29.0h-1.75zM22.75 435h1.75v29.0h-1.75zM38.5 435h1.75v29.0h-1.75zM49 435h1.75v29.0h-1.75zM89.25 435h1.75v29.0h-1.75zM8.75 522h1.75v29.0h-1.75zM19.25 522h1.75v29.0h-1.75zM10.5 551h1.75v29.0h-1.75zM36.75 551h1.75v29.0h-1.75zM22.75 580h1.75v29.0h-1.75zM40.25 580h1.75v29.0h-1.75zM105 609h1.75v29.0h-1.75zM56 638h1.75v29.0h-1.75zM19.25 667h1.75v29.0h-1.75zM70 667h1.75v29.0h-1.75zM40.25 696h1.75v29.0h-1.75zM70 783h1.75v29.0h-1.75zM63 812h1.75v29.0h-1.75zM73.5 812h1.75v29.0h-1.75zM38.5 870h1.75v29.0h-1.75zM29.75 928h1.75v29.0h-1.75zM66.5 928h1.75v29.0h-1.75zM28 1044h1.75v29.0h-1.75zM85.75 1073h1.75v29.0h-1.75zM101.5 1073h1.75v29.0h-1.75zM87.5 1102h1.75v29.0h-1.75zM94.5 1102h1.75v29.0h-1.75zM26.25 1131h1.75v29.0h-1.75zM56 1160h1.75v29.0h-1.75zM10.5 1189h1.75v29.0h-1.75zM64.75 1189h1.75v29.0h-1.75zM33.25 1218h1.75v29.0h-1.75zM56 1218h1.75v29.0h-1.75zM66.5 1218h1.75v29.0h-1.75zM92.75 1218h1.75v29.0h-1.75zM47.25 1276h1.75v29.0h-1.75zM105 1276h1.75v29.0h-1.75zM1.75 1305h1.75v29.0h-1.75zM66.5 1305h1.75v29.0h-1.75zM101.5 1305h1.75v29.0h-1.75zM12.25 1363h1.75v29.0h-1.75zM45.5 1363h1.75v29.0h-1.75zM91 1421h1.75v29.0h-1.75zM106.75 1421h1.75v29.0h-1.75zM36.75 1450h1.75v29.0h-1.75zM63 1450h1.75v29.0h-1.75z"/>
<path fill="#8c8c8c" d="M8.75 0h1.75v29.0h-1.75zM28 0h1.75v29.0h-1.75zM38.5 0h1.75v29.0h-1.75zM52.5 0h1.75v29.0h-1.75zM73.5 0h1.75v29.0h-1.75zM82.25 0h1.75v29.0h-1.75zM103.25 0h1.75v29.0h-1.75zM17.5 29h1.75v29.0h-1.75zM63 29h1.75v29.0h-1.75zM77 29h1.75v29.0h-1.75zM10.5 58h1.75v29.0h-1.75zM15.75 58h1.75v29.0h-1.75zM35 58h1.75v29.0h-1.75zM54.25 58h1.75v29.0h-1.75zM61.25 58h1.75v29.0h-1.75zM68.25 58h1.75v29.0h-1.75zM82.25 58h1.75v29.0h-1.75zM87.5 58h1.75v29.0h-1.75zM92.75 58h1.75v29.0h-1.75zM14 87h1.75v29.0h-1.75zM26.25 87h1.75v29.0h-1.75zM52.5 87h1.75v29.0h-1.75zM59.5 87h1.75v29.0h-1.75zM77 87h1.75v29.0h-1.75zM89.25 87h1.75v29.0h-1.75zM99.75 87h1.75v29.0h-1.75zM7 116h1.75v29.0h-1.75zM21 116h1.75v29.0h-1.75zM38.5 116h1.75v29.0h-1.75zM52.5 116h1.75v29.0h-1.75zM57.75 116h1.75v29.0h-1.75zM70 116h1.75v29.0h-1.75zM96.25 116h1.75v29.0h-1.75zM24.5 145h1.75v29.0h-1.75zM42 145h1.75v29.0h-1.75zM63 145h1.75v29.0h-1.75zM68.25 145h1.75v29.0h-1.75zM1.75 174h1.75v29.0h-1.75zM35 174h1.75v29.0h-1.75zM68.25 174h1.75v29.0h-1.75zM80.5 174h1.75v29.0h-1.75zM92.75 174h1.75v29.0h-1.75zM33.25 203h1.75v29.0h-1.75zM40.25 203h1.75v29.0h-1.75zM56 203h1.75v29.0h-1.75zM68.25 203h1.75v29.0h-1.75zM80.5 203h1.75v29.0h-1.75zM1.75 232h1.75v29.0h-1.75zM5.25 232h1.75v29.0h-1.75zM15.75 232h1.75v29.0h-1.75zM33.25 232h1.75v29.0h-1.75zM42 232h1.75v29.0h-1.75zM1.75 261h1.75v29.0h-1.75zM14 261h1.75v29.0h-1.75zM33.25 261h1.75v29.0h-1.75zM45.5 261h1.75v29.0h-1.75zM71.75 261h1.75v29.0h-1.75zM61.25 290h1.75v29.0h-1.75zM70 290h1.75v29.0h-1.75zM31.5 319h1.75v29.0h-1.75zM54.25 319h1.75v29.0h-1.75zM75.25 319h1.75v29.0h-1.75zM87.5 319h1.75v29.0h-1.75zM110.25 319h1.75v29.0h-1.75zM5.25 348h1.75v29.0h-1.75zM14 348h1.75v29.0h-1.75zM29.75 348h1.75v29.0h-1.75zM56 348h1.75v29.0h-1.75zM101.5 348h1.75v29.0h-1.75zM108.5 348h1.75v29.0h-1.75zM28 377h1.75v29.0h-1.75zM40.25 377h1.75v29.0h-1.75zM59.5 377h1.75v29.0h-1.75zM78.75 377h1.75v29.0h-1.75zM92.75 377h1.75v29.0h-1.75zM103.25 377h1.75v29.0h-1.75zM106.75 377h1.75v29.0h-1.75zM14 406h1.75v29.0h-1.75zM22.75 406h1.75v29.0h-1.75zM33.25 406h1.75v29.0h-1.75zM54.25 406h1.75v29.0h-1.75zM56 406h1.75v29.0h-1.75zM82.25 406h1.75v29.0h-1.75zM94.5 406h1.75v29.0h-1.75zM101.5 406h1.75v29.0h-1.75zM7 435h1.75v29.0h-1.75zM40.25 435h1.75v29.0h-1.75zM66.5 435h1.75v29.0h-1.75zM70 435h1.75v29.0h-1.75zM110.25 435h1.75v29.0h-1.75zM10.5 464h1.75v29.0h-1.75zM31.5 464h1.75v29.0h-1.75zM78.75 464h1.75v29.0h-1.75zM85.75 464h1.75v29.0h-1.75zM91 464h1.75v29.0h-1.75zM7 493h1.75v29.0h-1.75zM12.25 493h1.75v29.0h-1.75zM75.25 493h1.75v29.0h-1.75zM77 493h1.75v29.0h-1.75zM92.75 493h1.75v29.0h-1.75zM14 522h1.75v29.0h-1.75zM73.5 522h1.75v29.0h-1.75zM96.25 522h1.75v29.0h-1.75zM12.25 551h1.75v29.0h-1.75zM22.75 551h1.75v29.0h-1.75zM77 551h1.75v29.0h-1.75zM84 551h1.75v29.0h-1.75zM106.75 551h1.75v29.0h-1.75zM63 580h1.75v29.0h-1.75zM3.5 609h1.75v29.0h-1.75zM12.25 609h1.75v29.0h-1.75zM29.75 609h1.75v29.0h-1.75zM59.5 609h1.75v29.0h-1.75zM78.75 609h1.75v29.0h-1.75zM99.75 609h1.75v29.0h-1.75zM110.25 609h1.75v29.0h-1.75zM10.5 638h1.75v29.0h-1.75zM19.25 638h1.75v29.0h-1.75zM24.5 638h1.75v29.0h-1.75zM43.75 638h1.75v29.0h-1.75zM82.25 638h1.75v29.0h-1.75zM91 638h1.75v29.0h-1.75zM7 667h1.75v29.0h-1.75zM15.75 667h1.75v29.0h-1.75zM35 667h1.75v29.0h-1.75zM75.25 667h1.75v29.0h-1.75zM89.25 667h1.75v29.0h-1.75zM68.25 696h1.75v29.0h-1.75zM43.75 725h1.75v29.0h-1.75zM49 725h1.75v29.0h-1.75zM70 725h1.75v29.0h-1.75zM80.5 725h1.75v29.0h-1.75zM89.25 725h1.75v29.0h-1.75zM103.25 725h1.75v29.0h-1.75zM108.5 725h1.75v29.0h-1.75zM42 754h1.75v29.0h-1.75zM106.75 754h1.75v29.0h-1.75zM22.75 783h1.75v29.0h-1.75zM28 783h1.75v29.0h-1.75zM43.75 783h1.75v29.0h-1.75zM75.25 783h1.75v29.0h-1.75zM87.5 783h1.75v29.0h-1.75zM3.5 812h1.75v29.0h-1.75zM26.25 812h1.75v29.0h-1.75zM33.25 812h1.75v29.0h-1.75zM43.75 812h1.75v29.0h-1.75zM103.25 812h1.75v29.0h-1.75zM7 841h1.75v29.0h-1.75zM66.5 841h1.75v29.0h-1.75zM94.5 841h1.75v29.0h-1.75zM24.5 899h1.75v29.0h-1.75zM56 899h1.75v29.0h-1.75zM108.5 899h1.75v29.0h-1.75zM0 928h1.75v29.0h-1.75zM24.5 928h1.75v29.0h-1.75zM49 928h1.75v29.0h-1.75zM70 928h1.75v29.0h-1.75zM75.25 928h1.75v29.0h-1.75zM91 928h1.75v29.0h-1.75zM94.5 928h1.75v29.0h-1.75zM73.5 957h1.75v29.0h-1.75zM29.75 986h1.75v29.0h-1.75zM54.25 986h1.75v29.0h-1.75zM7 1015h1.75v29.0h-1.75zM49 1015h1.75v29.0h-1.75zM70 1015h1.75v29.0h-1.75zM87.5 1015h1.75v29.0h-1.75zM96.25 1015h1.75v29.0h-1.75zM1.75 1044h1.75v29.0h-1.75zM14 1044h1.75v29.0h-1.75zM21 1073h1.75v29.0h-1.75zM94.5 1073h1.75v29.0h-1.75zM8.75 1102h1.75v29.0h-1.75zM22.75 1102h1.75v29.0h-1.75zM50.75 1102h1.75v29.0h-1.75zM59.5 1102h1.75v29.0h-1.75zM7 1131h1.75v29.0h-1.75zM12.25 1131h1.75v29.0h-1.75zM22.75 1131h1.75v29.0h-1.75zM33.25 1131h1.75v29.0h-1.75zM49 1131h1.75v29.0h-1.75zM68.25 1131h1.75v29.0h-1.75zM94.5 1131h1.75v29.0h-1.75zM3.5 1160h1.75v29.0h-1.75zM68.25 1160h1.75v29.0h-1.75zM73.5 1160h1.75v29.0h-1.75zM42 1189h1.75v29.0h-1.75zM89.25 1189h1.75v29.0h-1.75zM92.75 1189h1.75v29.0h-1.75zM15.75 1218h1.75v29.0h-1.75zM82.25 1218h1.75v29.0h-1.75zM3.5 1247h1.75v29.0h-1.75zM21 1247h1.75v29.0h-1.75zM36.75 1247h1.75v29.0h-1.75zM87.5 1247h1.75v29.0h-1.75zM1.75 1276h1.75v29.0h-1.75zM33.25 1276h1.75v29.0h-1.75zM61.25 1276h1.75v29.0h-1.75zM73.5 1276h1.75v29.0h-1.75zM80.5 1276h1.75v29.0h-1.75zM98 1276h1.75v29.0h-1.75zM38.5 1305h1.75v29.0h-1.75zM43.75 1305h1.75v29.0h-1.75zM61.25 1305h1.75v29.0h-1.75zM36.75 1334h1.75v29.0h-1.75zM42 1334h1.75v29.0h-1.75zM52.5 1334h1.75v29.0h-1.75zM59.5 1334h1.75v29.0h-1.75zM66.5 1334h1.75v29.0h-1.75zM77 1334h1.75v29.0h-1.75zM92.75 1334h1.75v29.0h-1.75zM98 1334h1.75v29.0h-1.75zM47.25 1363h1.75v29.0h-1.75zM78.75 1363h1.75v29.0h-1.75zM82.25 1363h1.75v29.0h-1.75zM98 1363h1.75v29.0h-1.75zM3.5 1392h1.75v29.0h-1.75zM8.75 1392h1.75v29.0h-1.75zM24.5 1392h1.75v29.0h-1.75zM36.75 1392h1.75v29.0h-1.75zM47.25 1392h1.75v29.0h-1.75zM63 1392h1.75v29.0h-1.75zM84 1392h1.75v29.0h-1.75zM31.5 1421h1.75v29.0h-1.75zM42 1421h1.75v29.0h-1.75zM19.25 1450h1.75v29.0h-1.75zM47.25 1450h1.75v29.0h-1.75zM68.25 1450h1.75v29.0h-1.75zM70 1450h1.75v29.0h-1.75zM89.25 1450h1.75v29.0h-1.75z"/>
<path fill="#949494" d="M26.25 58h1.75v29.0h-1.75zM73.5 58h1.75v29.0h-1.75zM31.5 174h1.75v29.0h-1.75zM71.75 203h1.75v29.0h-1.75zM50.75 377h1.75v29.0h-1.75zM108.5 464h1.75v29.0h-1.75zM101.5 522h1.75v29.0h-1.75zM54.25 580h1.75v29.0h-1.75zM35 638h1.75v29.0h-1.75zM40.25 783h1.75v29.0h-1.75zM66.5 783h1.75v29.0h-1.75zM1.75 870h1.75v29.0h-1.75zM52.5 957h1.75v29.0h-1.75zM57.75 986h1.75v29.0h-1.75zM14 1102h1.75v29.0h-1.75zM71.75 1102h1.75v29.0h-1.75zM3.5 1131h1.75v29.0h-1.75zM24.5 1247h1.75v29.0h-1.75zM73.5 1247h1.75v29.0h-1.75zM29.75 1305h1.75v29.0h-1.75zM45.5 1421h1.75v29.0h-1.75zM54.25 1450h1.75v29.0h-1.75z"/>
<path fill="#9c9c9c" d="M105 174h1.75v29.0h-1.75zM17.5 348h1.75v29.0h-1.75zM68.25 348h1.75v29.0h-1.75zM68.25 406h1.75v29.0h-1.75zM38.5 609h1.75v29.0h-1.75zM12.25 696h1.75v29.0h-1.75zM21 1334h1.75v29.0h-1.75z"/>
<path fill="#a4a4a4" d="M38.5 87h1.75v29.0h-1.75zM12.25 116h1.75v29.0h-1.75zM71.75 145h1.75v29.0h-1.75zM110.25 145h1.75v29.0h-1.75zM19.25 406h1.75v29.0h-1.75zM35 464h1.75v29.0h-1.75zM59.5 522h1.75v29.0h-1.75zM110.25 551h1.75v29.0h-1.75zM52.5 725h1.75v29.0h-1.75zM0 754h1.75v29.0h-1.75zM49 812h1.75v29.0h-1.75zM14 899h1.75v29.0h-1.75zM70 986h1.75v29.0h-1.75zM61.25 1363h1.75v29.0h-1.75zM99.75 1450h1.75v29.0h-1.75z"/>
<path fill="#b4b4b4" d="M54.25 29h1.75v29.0h-1.75zM45.5 58h1.75v29.0h-1.75zM15.75 145h1.75v29.0h-1.75zM38.5 145h1.75v29.0h-1.75zM45.5 319h1.75v29.0h-1.75zM45.5 348h1.75v29.0h-1.75zM50.75 899h1.75v29.0h-1.75zM108.5 986h1.75v29.0h-1.75zM42 1073h1.75v29.0h-1.75zM0 1102h1.75v29.0h-1.75zM52.5 1189h1.75v29.0h-1.75zM0 1334h1.75v29.0h-1.75z"/>
<path fill="#bcbcbc" d="M66.5 87h1.75v29.0h-1.75zM80.5 87h1.75v29.0h-1.75zM78.75 145h1.75v29.0h-1.75zM99.75 145h1.75v29.0h-1.75zM21 174h1.75v29.0h-1.75zM54.25 174h1.75v29.0h-1.75zM103.25 174h1.75v29.0h-1.75zM66.5 348h1.75v29.0h-1.75zM78.75 348h1.75v29.0h-1.75zM66.5 406h1.75v29.0h-1.75zM42 464h1.75v29.0h-1.75zM43.75 493h1.75v29.0h-1.75zM49 522h1.75v29.0h-1.75zM29.75 551h1.75v29.0h-1.75zM70 551h1.75v29.0h-1.75zM5.25 580h1.75v29.0h-1.75zM80.5 580h1.75v29.0h-1.75zM96.25 667h1.75v29.0h-1.75zM10.5 696h1.75v29.0h-1.75zM70 899h1.75v29.0h-1.75zM29.75 957h1.75v29.0h-1.75zM91 957h1.75v29.0h-1.75zM43.75 986h1.75v29.0h-1.75zM87.5 986h1.75v29.0h-1.75zM101.5 1247h1.75v29.0h-1.75zM29.75 1276h1.75v29.0h-1.75zM19.25 1305h1.75v29.0h-1.75zM80.5 1305h1.75v29.0h-1.75zM19.25 1334h1.75v29.0h-1.75zM12.25 1392h1.75v29.0h-1.75zM28 1392h1.75v29.0h-1.75zM66.5 1421h1.75v29.0h-1.75zM12.25 1450h1.75v29.0h-1.75zM26.25 1450h1.75v29.0h-1.75zM92.75 1450h1.75v29.0h-1.75z"/>
<path fill="#c4c4c4" d="M61.25 0h1.75v29.0h-1.75zM14 29h1.75v29.0h-1.75zM19.25 29h1.75v29.0h-1.75zM73.5 29h1.75v29.0h-1.75zM78.75 29h1.75v29.0h-1.75zM92.75 29h1.75v29.0h-1.75zM106.75 29h1.75v29.0h-1.75zM31.5 58h1.75v29.0h-1.75zM49 87h1.75v29.0h-1.75zM54.25 87h1.75v29.0h-1.75zM66.5 116h1.75v29.0h-1.75zM106.75 116h1.75v29.0h-1.75zM12.25 145h1.75v29.0h-1.75zM89.25 145h1.75v29.0h-1.75zM5.25 174h1.75v29.0h-1.75zM56 232h1.75v29.0h-1.75zM85.75 232h1.75v29.0h-1.75zM38.5 261h1.75v29.0h-1.75zM50.75 261h1.75v29.0h-1.75zM59.5 261h1.75v29.0h-1.75zM85.75 261h1.75v29.0h-1.75zM1.75 290h1.75v29.0h-1.75zM98 290h1.75v29.0h-1.75zM0 319h1.75v29.0h-1.75zM15.75 319h1.75v29.0h-1.75zM77 319h1.75v29.0h-1.75zM98 319h1.75v29.0h-1.75zM103.25 319h1.75v29.0h-1.75zM26.25 348h1.75v29.0h-1.75zM31.5 348h1.75v29.0h-1.75zM98 348h1.75v29.0h-1.75zM1.75 377h1.75v29.0h-1.75zM10.5 377h1.75v29.0h-1.75zM56 377h1.75v29.0h-1.75zM99.75 377h1.75v29.0h-1.75zM105 377h1.75v29.0h-1.75zM28 406h1.75v29.0h-1.75zM50.75 435h1.75v29.0h-1.75zM91 435h1.75v29.0h-1.75zM21 493h1.75v29.0h-1.75zM10.5 522h1.75v29.0h-1.75zM15.75 522h1.75v29.0h-1.75zM49 551h1.75v29.0h-1.75zM92.75 551h1.75v29.0h-1.75zM24.5 580h1.75v29.0h-1.75zM96.25 580h1.75v29.0h-1.75zM17.5 609h1.75v29.0h-1.75zM99.75 638h1.75v29.0h-1.75zM71.75 667h1.75v29.0h-1.75zM80.5 696h1.75v29.0h-1.75zM38.5 754h1.75v29.0h-1.75zM71.75 783h1.75v29.0h-1.75zM103.25 783h1.75v29.0h-1.75zM7 812h1.75v29.0h-1.75zM10.5 812h1.75v29.0h-1.75zM94.5 812h1.75v29.0h-1.75zM50.75 841h1.75v29.0h-1.75zM5.25 928h1.75v29.0h-1.75zM103.25 928h1.75v29.0h-1.75zM24.5 957h1.75v29.0h-1.75zM77 986h1.75v29.0h-1.75zM3.5 1044h1.75v29.0h-1.75zM77 1044h1.75v29.0h-1.75zM0 1073h1.75v29.0h-1.75zM26.25 1073h1.75v29.0h-1.75zM96.25 1102h1.75v29.0h-1.75zM106.75 1160h1.75v29.0h-1.75zM47.25 1189h1.75v29.0h-1.75zM8.75 1218h1.75v29.0h-1.75zM12.25 1218h1.75v29.0h-1.75zM57.75 1247h1.75v29.0h-1.75zM75.25 1276h1.75v29.0h-1.75zM15.75 1305h1.75v29.0h-1.75zM63 1305h1.75v29.0h-1.75zM77 1305h1.75v29.0h-1.75zM91 1305h1.75v29.0h-1.75zM103.25 1392h1.75v29.0h-1.75zM77 1421h1.75v29.0h-1.75zM64.75 1450h1.75v29.0h-1.75z"/>
<path fill="#cccccc" d="M1.75 87h1.75v29.0h-1.75zM110.25 87h1.75v29.0h-1.75zM70 609h1.75v29.0h-1.75zM52.5 754h1.75v29.0h-1.75zM47.25 1102h1.75v29.0h-1.75zM0 1305h1.75v29.0h-1.75zM24.5 1363h1.75v29.0h-1.75zM73.5 1392h1.75v29.0h-1.75z"/>
<path fill="#d4d4d4" d="M94.5 87h1.75v29.0h-1.75zM106.75 87h1.75v29.0h-1.75zM35 203h1.75v29.0h-1.75zM63 261h1.75v29.0h-1.75zM49 290h1.75v29.0h-1.75zM63 319h1.75v29.0h-1.75zM96.25 406h1.75v29.0h-1.75zM78.75 493h1.75v29.0h-1.75zM54.25 609h1.75v29.0h-1.75zM66.5 609h1.75v29.0h-1.75zM8.75 667h1.75v29.0h-1.75zM49 754h1.75v29.0h-1.75zM68.25 870h1.75v29.0h-1.75zM17.5 986h1.75v29.0h-1.75zM43.75 1102h1.75v29.0h-1.75zM21 1363h1.75v29.0h-1.75zM70 1392h1.75v29.0h-1.75z"/>
<path fill="#dcdcdc" d="M84 58h1.75v29.0h-1.75zM54.25 116h1.75v29.0h-1.75zM29.75 145h1.75v29.0h-1.75zM73.5 290h1.75v29.0h-1.75zM87.5 464h1.75v29.0h-1.75zM8.75 493h1.75v29.0h-1.75zM15.75 609h1.75v29.0h-1.75zM71.75 928h1.75v29.0h-1.75zM68.25 1189h1.75v29.0h-1.75zM40.25 1305h1.75v29.0h-1.75zM80.5 1334h1.75v29.0h-1.75zM94.5 1334h1.75v29.0h-1.75z"/>
<path fill="#e4e4e4" d="M64.75 0h1.75v29.0h-1.75zM12.25 58h1.75v29.0h-1.75zM94.5 58h1.75v29.0h-1.75zM96.25 87h1.75v29.0h-1.75zM101.5 87h1.75v29.0h-1.75zM8.75 116h1.75v29.0h-1.75zM92.75 145h1.75v29.0h-1.75zM38.5 174h1.75v29.0h-1.75zM42 203h1.75v29.0h-1.75zM47.25 203h1.75v29.0h-1.75zM35 232h1.75v29.0h-1.75zM64.75 232h1.75v29.0h-1.75zM35 261h1.75v29.0h-1.75zM94.5 261h1.75v29.0h-1.75zM63 290h1.75v29.0h-1.75zM33.25 319h1.75v29.0h-1.75zM99.75 319h1.75v29.0h-1.75zM103.25 406h1.75v29.0h-1.75zM108.5 406h1.75v29.0h-1.75zM42 522h1.75v29.0h-1.75zM33.25 580h1.75v29.0h-1.75zM110.25 580h1.75v29.0h-1.75zM5.25 609h1.75v29.0h-1.75zM56 609h1.75v29.0h-1.75zM61.25 609h1.75v29.0h-1.75zM101.5 609h1.75v29.0h-1.75zM106.75 609h1.75v29.0h-1.75zM21 638h1.75v29.0h-1.75zM103.25 638h1.75v29.0h-1.75zM71.75 725h1.75v29.0h-1.75zM82.25 725h1.75v29.0h-1.75zM43.75 754h1.75v29.0h-1.75zM29.75 783h1.75v29.0h-1.75zM47.25 783h1.75v29.0h-1.75zM35 812h1.75v29.0h-1.75zM110.25 812h1.75v29.0h-1.75zM75.25 841h1.75v29.0h-1.75zM8.75 870h1.75v29.0h-1.75zM99.75 870h1.75v29.0h-1.75zM87.5 899h1.75v29.0h-1.75zM50.75 928h1.75v29.0h-1.75zM106.75 928h1.75v29.0h-1.75zM31.5 986h1.75v29.0h-1.75zM36.75 986h1.75v29.0h-1.75zM80.5 986h1.75v29.0h-1.75zM22.75 1073h1.75v29.0h-1.75zM10.5 1131h1.75v29.0h-1.75zM75.25 1160h1.75v29.0h-1.75zM38.5 1334h1.75v29.0h-1.75zM99.75 1363h1.75v29.0h-1.75zM64.75 1392h1.75v29.0h-1.75zM80.5 1421h1.75v29.0h-1.75zM38.5 1450h1.75v29.0h-1.75z"/>
<path fill="#ececec" d="M22.75 0h1.75v29.0h-1.75zM63 0h1.75v29.0h-1.75zM1.75 29h1.75v29.0h-1.75zM61.25 29h1.75v29.0h-1.75zM22.75 58h1.75v29.0h-1.75zM70 58h1.75v29.0h-1.75zM71.75 58h1.75v29.0h-1.75zM89.25 58h1.75v29.0h-1.75zM96.25 58h1.75v29.0h-1.75zM36.75 87h1.75v29.0h-1.75zM78.75 87h1.75v29.0h-1.75zM108.5 87h1.75v29.0h-1.75zM10.5 116h1.75v29.0h-1.75zM28 116h1.75v29.0h-1.75zM40.25 116h1.75v29.0h-1.75zM42 116h1.75v29.0h-1.75zM56 116h1.75v29.0h-1.75zM26.25 145h1.75v29.0h-1.75zM28 145h1.75v29.0h-1.75zM36.75 145h1.75v29.0h-1.75zM52.5 145h1.75v29.0h-1.75zM91 145h1.75v29.0h-1.75zM108.5 145h1.75v29.0h-1.75zM12.25 174h1.75v29.0h-1.75zM29.75 174h1.75v29.0h-1.75zM45.5 174h1.75v29.0h-1.75zM63 174h1.75v29.0h-1.75zM84 174h1.75v29.0h-1.75zM0 203h1.75v29.0h-1.75zM8.75 203h1.75v29.0h-1.75zM29.75 203h1.75v29.0h-1.75zM52.5 261h1.75v29.0h-1.75zM80.5 290h1.75v29.0h-1.75zM89.25 290h1.75v29.0h-1.75zM36.75 319h1.75v29.0h-1.75zM85.75 319h1.75v29.0h-1.75zM85.75 348h1.75v29.0h-1.75zM3.5 377h1.75v29.0h-1.75zM47.25 377h1.75v29.0h-1.75zM63 377h1.75v29.0h-1.75zM17.5 406h1.75v29.0h-1.75zM91 406h1.75v29.0h-1.75zM84 435h1.75v29.0h-1.75zM1.75 464h1.75v29.0h-1.75zM50.75 464h1.75v29.0h-1.75zM52.5 464h1.75v29.0h-1.75zM54.25 464h1.75v29.0h-1.75zM56 464h1.75v29.0h-1.75zM92.75 464h1.75v29.0h-1.75zM10.5 493h1.75v29.0h-1.75zM35 493h1.75v29.0h-1.75zM40.25 522h1.75v29.0h-1.75zM57.75 522h1.75v29.0h-1.75zM98 522h1.75v29.0h-1.75zM99.75 522h1.75v29.0h-1.75zM61.25 551h1.75v29.0h-1.75zM94.5 551h1.75v29.0h-1.75zM89.25 580h1.75v29.0h-1.75zM98 580h1.75v29.0h-1.75zM45.5 609h1.75v29.0h-1.75zM68.25 609h1.75v29.0h-1.75zM85.75 609h1.75v29.0h-1.75zM92.75 609h1.75v29.0h-1.75zM1.75 638h1.75v29.0h-1.75zM31.5 638h1.75v29.0h-1.75zM57.75 638h1.75v29.0h-1.75zM101.5 638h1.75v29.0h-1.75zM3.5 667h1.75v29.0h-1.75zM42 667h1.75v29.0h-1.75zM108.5 667h1.75v29.0h-1.75zM3.5 696h1.75v29.0h-1.75zM21 696h1.75v29.0h-1.75zM70 696h1.75v29.0h-1.75zM71.75 696h1.75v29.0h-1.75zM3.5 725h1.75v29.0h-1.75zM54.25 725h1.75v29.0h-1.75zM56 725h1.75v29.0h-1.75zM57.75 725h1.75v29.0h-1.75zM96.25 725h1.75v29.0h-1.75zM98 725h1.75v29.0h-1.75zM99.75 725h1.75v29.0h-1.75zM5.25 754h1.75v29.0h-1.75zM7 754h1.75v29.0h-1.75zM8.75 754h1.75v29.0h-1.75zM10.5 754h1.75v29.0h-1.75zM12.25 754h1.75v29.0h-1.75zM14 754h1.75v29.0h-1.75zM15.75 754h1.75v29.0h-1.75zM17.5 754h1.75v29.0h-1.75zM19.25 754h1.75v29.0h-1.75zM21 754h1.75v29.0h-1.75zM29.75 754h1.75v29.0h-1.75zM50.75 754h1.75v29.0h-1.75zM0 783h1.75v29.0h-1.75zM5.25 783h1.75v29.0h-1.75zM38.5 783h1.75v29.0h-1.75zM82.25 841h1.75v29.0h-1.75zM0 870h1.75v29.0h-1.75zM14 870h1.75v29.0h-1.75zM63 870h1.75v29.0h-1.75zM12.25 899h1.75v29.0h-1.75zM19.25 899h1.75v29.0h-1.75zM85.75 899h1.75v29.0h-1.75zM7 928h1.75v29.0h-1.75zM73.5 928h1.75v29.0h-1.75zM19.25 986h1.75v29.0h-1.75zM68.25 986h1.75v29.0h-1.75zM78.75 986h1.75v29.0h-1.75zM96.25 986h1.75v29.0h-1.75zM98 986h1.75v29.0h-1.75zM3.5 1015h1.75v29.0h-1.75zM10.5 1015h1.75v29.0h-1.75zM31.5 1015h1.75v29.0h-1.75zM33.25 1015h1.75v29.0h-1.75zM49 1073h1.75v29.0h-1.75zM10.5 1102h1.75v29.0h-1.75zM12.25 1102h1.75v29.0h-1.75zM45.5 1102h1.75v29.0h-1.75zM70 1102h1.75v29.0h-1.75zM1.75 1131h1.75v29.0h-1.75zM61.25 1131h1.75v29.0h-1.75zM5.25 1160h1.75v29.0h-1.75zM87.5 1160h1.75v29.0h-1.75zM89.25 1160h1.75v29.0h-1.75zM14 1189h1.75v29.0h-1.75zM78.75 1189h1.75v29.0h-1.75zM71.75 1218h1.75v29.0h-1.75zM99.75 1218h1.75v29.0h-1.75zM33.25 1247h1.75v29.0h-1.75zM49 1247h1.75v29.0h-1.75zM70 1247h1.75v29.0h-1.75zM57.75 1276h1.75v29.0h-1.75zM17.5 1305h1.75v29.0h-1.75zM28 1305h1.75v29.0h-1.75zM92.75 1305h1.75v29.0h-1.75zM68.25 1334h1.75v29.0h-1.75zM70 1334h1.75v29.0h-1.75zM87.5 1334h1.75v29.0h-1.75zM99.75 1334h1.75v29.0h-1.75zM22.75 1363h1.75v29.0h-1.75zM52.5 1363h1.75v29.0h-1.75zM54.25 1363h1.75v29.0h-1.75zM59.5 1363h1.75v29.0h-1.75zM10.5 1392h1.75v29.0h-1.75zM26.25 1392h1.75v29.0h-1.75zM43.75 1392h1.75v29.0h-1.75zM71.75 1392h1.75v29.0h-1.75zM94.5 1392h1.75v29.0h-1.75zM78.75 1421h1.75v29.0h-1.75zM3.5 1450h1.75v29.0h-1.75zM50.75 1450h1.75v29.0h-1.75zM52.5 1450h1.75v29.0h-1.75zM91 1450h1.75v29.0h-1.75z"/>
<path fill="#f4f4f4" d="M10.5 0h1.75v29.0h-1.75zM98 58h1.75v29.0h-1.75zM29.75 87h1.75v29.0h-1.75zM10.5 203h1.75v29.0h-1.75zM49 203h1.75v29.0h-1.75zM101.5 203h1.75v29.0h-1.75zM47.25 261h1.75v29.0h-1.75zM14 319h1.75v29.0h-1.75zM0 348h1.75v29.0h-1.75zM110.25 348h1.75v29.0h-1.75zM75.25 406h1.75v29.0h-1.75zM12.25 435h1.75v29.0h-1.75zM54.25 435h1.75v29.0h-1.75zM80.5 551h1.75v29.0h-1.75zM108.5 609h1.75v29.0h-1.75zM45.5 638h1.75v29.0h-1.75zM56 696h1.75v29.0h-1.75zM57.75 696h1.75v29.0h-1.75zM59.5 696h1.75v29.0h-1.75zM106.75 696h1.75v29.0h-1.75zM108.5 696h1.75v29.0h-1.75zM110.25 696h1.75v29.0h-1.75zM0 841h1.75v29.0h-1.75zM19.25 841h1.75v29.0h-1.75zM12.25 1015h1.75v29.0h-1.75zM68.25 1073h1.75v29.0h-1.75zM63 1131h1.75v29.0h-1.75zM38.5 1160h1.75v29.0h-1.75zM40.25 1160h1.75v29.0h-1.75zM42 1160h1.75v29.0h-1.75zM43.75 1160h1.75v29.0h-1.75zM45.5 1160h1.75v29.0h-1.75zM47.25 1160h1.75v29.0h-1.75zM49 1160h1.75v29.0h-1.75zM50.75 1160h1.75v29.0h-1.75zM91 1247h1.75v29.0h-1.75zM68.25 1363h1.75v29.0h-1.75zM70 1363h1.75v29.0h-1.75zM71.75 1363h1.75v29.0h-1.75zM73.5 1363h1.75v29.0h-1.75zM75.25 1363h1.75v29.0h-1.75zM85.75 1392h1.75v29.0h-1.75zM87.5 1392h1.75v29.0h-1.75zM89.25 1392h1.75v29.0h-1.75zM91 1392h1.75v29.0h-1.75zM92.75 1392h1.75v29.0h-1.75zM14 1421h1.75v29.0h-1.75zM40.25 1450h1.75v29.0h-1.75z"/>
<path fill="#fcfcfc" d="M96.25 0h1.75v29.0h-1.75zM5.25 29h1.75v29.0h-1.75zM7 29h1.75v29.0h-1.75zM8.75 29h1.75v29.0h-1.75zM45.5 29h1.75v29.0h-1.75zM64.75 58h1.75v29.0h-1.75zM99.75 58h1.75v29.0h-1.75zM101.5 58h1.75v29.0h-1.75zM103.25 58h1.75v29.0h-1.75zM108.5 58h1.75v29.0h-1.75zM110.25 58h1.75v29.0h-1.75zM40.25 87h1.75v29.0h-1.75zM42 87h1.75v29.0h-1.75zM43.75 87h1.75v29.0h-1.75zM92.75 87h1.75v29.0h-1.75zM0 116h1.75v29.0h-1.75zM1.75 116h1.75v29.0h-1.75zM3.5 116h1.75v29.0h-1.75zM14 116h1.75v29.0h-1.75zM15.75 116h1.75v29.0h-1.75zM17.5 116h1.75v29.0h-1.75zM31.5 116h1.75v29.0h-1.75zM33.25 116h1.75v29.0h-1.75zM35 116h1.75v29.0h-1.75zM59.5 116h1.75v29.0h-1.75zM61.25 116h1.75v29.0h-1.75zM63 116h1.75v29.0h-1.75zM56 145h1.75v29.0h-1.75zM57.75 145h1.75v29.0h-1.75zM59.5 145h1.75v29.0h-1.75zM94.5 145h1.75v29.0h-1.75zM96.25 145h1.75v29.0h-1.75zM98 145h1.75v29.0h-1.75zM15.75 174h1.75v29.0h-1.75zM17.5 174h1.75v29.0h-1.75zM19.25 174h1.75v29.0h-1.75zM49 174h1.75v29.0h-1.75zM50.75 174h1.75v29.0h-1.75zM52.5 174h1.75v29.0h-1.75zM96.25 174h1.75v29.0h-1.75zM3.5 203h1.75v29.0h-1.75zM5.25 203h1.75v29.0h-1.75zM7 203h1.75v29.0h-1.75zM12.25 203h1.75v29.0h-1.75zM14 203h1.75v29.0h-1.75zM15.75 203h1.75v29.0h-1.75zM85.75 203h1.75v29.0h-1.75zM87.5 203h1.75v29.0h-1.75zM89.25 203h1.75v29.0h-1.75zM91 203h1.75v29.0h-1.75zM29.75 232h1.75v29.0h-1.75zM63 232h1.75v29.0h-1.75zM29.75 261h1.75v29.0h-1.75zM40.25 261h1.75v29.0h-1.75zM64.75 261h1.75v29.0h-1.75zM92.75 261h1.75v29.0h-1.75zM84 290h1.75v29.0h-1.75zM85.75 290h1.75v29.0h-1.75zM87.5 290h1.75v29.0h-1.75zM92.75 290h1.75v29.0h-1.75zM94.5 290h1.75v29.0h-1.75zM96.25 290h1.75v29.0h-1.75zM40.25 319h1.75v29.0h-1.75zM42 319h1.75v29.0h-1.75zM43.75 319h1.75v29.0h-1.75zM105 319h1.75v29.0h-1.75zM59.5 348h1.75v29.0h-1.75zM89.25 348h1.75v29.0h-1.75zM91 348h1.75v29.0h-1.75zM92.75 348h1.75v29.0h-1.75zM103.25 348h1.75v29.0h-1.75zM21 377h1.75v29.0h-1.75zM10.5 406h1.75v29.0h-1.75zM59.5 406h1.75v29.0h-1.75zM14 435h1.75v29.0h-1.75zM15.75 435h1.75v29.0h-1.75zM17.5 435h1.75v29.0h-1.75zM98 435h1.75v29.0h-1.75zM14 464h1.75v29.0h-1.75zM15.75 464h1.75v29.0h-1.75zM17.5 464h1.75v29.0h-1.75zM19.25 464h1.75v29.0h-1.75zM21 464h1.75v29.0h-1.75zM22.75 464h1.75v29.0h-1.75zM24.5 464h1.75v29.0h-1.75zM26.25 464h1.75v29.0h-1.75zM28 464h1.75v29.0h-1.75zM43.75 464h1.75v29.0h-1.75zM45.5 464h1.75v29.0h-1.75zM47.25 464h1.75v29.0h-1.75zM49 464h1.75v29.0h-1.75zM94.5 464h1.75v29.0h-1.75zM96.25 464h1.75v29.0h-1.75zM98 464h1.75v29.0h-1.75zM14 493h1.75v29.0h-1.75zM15.75 493h1.75v29.0h-1.75zM17.5 493h1.75v29.0h-1.75zM38.5 493h1.75v29.0h-1.75zM40.25 493h1.75v29.0h-1.75zM42 493h1.75v29.0h-1.75zM45.5 493h1.75v29.0h-1.75zM47.25 493h1.75v29.0h-1.75zM49 493h1.75v29.0h-1.75zM52.5 493h1.75v29.0h-1.75zM54.25 493h1.75v29.0h-1.75zM71.75 493h1.75v29.0h-1.75zM98 493h1.75v29.0h-1.75zM99.75 493h1.75v29.0h-1.75zM101.5 493h1.75v29.0h-1.75zM103.25 493h1.75v29.0h-1.75zM105 493h1.75v29.0h-1.75zM24.5 522h1.75v29.0h-1.75zM26.25 522h1.75v29.0h-1.75zM28 522h1.75v29.0h-1.75zM29.75 522h1.75v29.0h-1.75zM31.5 522h1.75v29.0h-1.75zM43.75 522h1.75v29.0h-1.75zM45.5 522h1.75v29.0h-1.75zM47.25 522h1.75v29.0h-1.75zM61.25 522h1.75v29.0h-1.75zM63 522h1.75v29.0h-1.75zM78.75 522h1.75v29.0h-1.75zM80.5 522h1.75v29.0h-1.75zM82.25 522h1.75v29.0h-1.75zM84 522h1.75v29.0h-1.75zM85.75 522h1.75v29.0h-1.75zM87.5 522h1.75v29.0h-1.75zM89.25 522h1.75v29.0h-1.75zM91 522h1.75v29.0h-1.75zM92.75 522h1.75v29.0h-1.75zM64.75 551h1.75v29.0h-1.75zM66.5 551h1.75v29.0h-1.75zM68.25 551h1.75v29.0h-1.75zM31.5 580h1.75v29.0h-1.75zM75.25 580h1.75v29.0h-1.75zM77 580h1.75v29.0h-1.75zM78.75 580h1.75v29.0h-1.75zM91 580h1.75v29.0h-1.75zM92.75 580h1.75v29.0h-1.75zM108.5 580h1.75v29.0h-1.75zM47.25 609h1.75v29.0h-1.75zM49 609h1.75v29.0h-1.75zM50.75 609h1.75v29.0h-1.75zM52.5 609h1.75v29.0h-1.75zM71.75 609h1.75v29.0h-1.75zM73.5 609h1.75v29.0h-1.75zM75.25 609h1.75v29.0h-1.75zM14 638h1.75v29.0h-1.75zM36.75 638h1.75v29.0h-1.75zM38.5 638h1.75v29.0h-1.75zM40.25 638h1.75v29.0h-1.75zM63 638h1.75v29.0h-1.75zM64.75 638h1.75v29.0h-1.75zM75.25 638h1.75v29.0h-1.75zM77 638h1.75v29.0h-1.75zM78.75 638h1.75v29.0h-1.75zM80.5 638h1.75v29.0h-1.75zM29.75 667h1.75v29.0h-1.75zM31.5 667h1.75v29.0h-1.75zM45.5 667h1.75v29.0h-1.75zM47.25 667h1.75v29.0h-1.75zM49 667h1.75v29.0h-1.75zM50.75 667h1.75v29.0h-1.75zM52.5 667h1.75v29.0h-1.75zM54.25 667h1.75v29.0h-1.75zM56 667h1.75v29.0h-1.75zM57.75 667h1.75v29.0h-1.75zM59.5 667h1.75v29.0h-1.75zM61.25 667h1.75v29.0h-1.75zM63 667h1.75v29.0h-1.75zM64.75 667h1.75v29.0h-1.75zM66.5 667h1.75v29.0h-1.75zM24.5 696h1.75v29.0h-1.75zM26.25 696h1.75v29.0h-1.75zM28 696h1.75v29.0h-1.75zM31.5 696h1.75v29.0h-1.75zM33.25 696h1.75v29.0h-1.75zM64.75 696h1.75v29.0h-1.75zM75.25 696h1.75v29.0h-1.75zM77 696h1.75v29.0h-1.75zM78.75 696h1.75v29.0h-1.75zM89.25 696h1.75v29.0h-1.75zM91 696h1.75v29.0h-1.75zM92.75 696h1.75v29.0h-1.75zM94.5 696h1.75v29.0h-1.75zM96.25 696h1.75v29.0h-1.75zM15.75 725h1.75v29.0h-1.75zM17.5 725h1.75v29.0h-1.75zM19.25 725h1.75v29.0h-1.75zM24.5 754h1.75v29.0h-1.75zM26.25 754h1.75v29.0h-1.75zM28 754h1.75v29.0h-1.75zM33.25 754h1.75v29.0h-1.75zM35 754h1.75v29.0h-1.75zM36.75 754h1.75v29.0h-1.75zM54.25 754h1.75v29.0h-1.75zM56 754h1.75v29.0h-1.75zM57.75 754h1.75v29.0h-1.75zM61.25 754h1.75v29.0h-1.75zM63 754h1.75v29.0h-1.75zM64.75 754h1.75v29.0h-1.75zM66.5 754h1.75v29.0h-1.75zM68.25 754h1.75v29.0h-1.75zM84 754h1.75v29.0h-1.75zM85.75 754h1.75v29.0h-1.75zM87.5 754h1.75v29.0h-1.75zM89.25 754h1.75v29.0h-1.75zM91 754h1.75v29.0h-1.75zM8.75 783h1.75v29.0h-1.75zM10.5 783h1.75v29.0h-1.75zM17.5 783h1.75v29.0h-1.75zM105 783h1.75v29.0h-1.75zM108.5 783h1.75v29.0h-1.75zM110.25 783h1.75v29.0h-1.75zM0 812h1.75v29.0h-1.75zM1.75 812h1.75v29.0h-1.75zM40.25 812h1.75v29.0h-1.75zM52.5 812h1.75v29.0h-1.75zM89.25 841h1.75v29.0h-1.75zM28 870h1.75v29.0h-1.75zM15.75 899h1.75v29.0h-1.75zM89.25 899h1.75v29.0h-1.75zM80.5 928h1.75v29.0h-1.75zM98 928h1.75v29.0h-1.75zM101.5 928h1.75v29.0h-1.75zM108.5 928h1.75v29.0h-1.75zM49 957h1.75v29.0h-1.75zM82.25 957h1.75v29.0h-1.75zM84 957h1.75v29.0h-1.75zM22.75 986h1.75v29.0h-1.75zM24.5 986h1.75v29.0h-1.75zM40.25 986h1.75v29.0h-1.75zM42 986h1.75v29.0h-1.75zM59.5 986h1.75v29.0h-1.75zM61.25 986h1.75v29.0h-1.75zM71.75 986h1.75v29.0h-1.75zM85.75 986h1.75v29.0h-1.75zM21 1044h1.75v29.0h-1.75zM49 1044h1.75v29.0h-1.75zM50.75 1044h1.75v29.0h-1.75zM70 1044h1.75v29.0h-1.75zM17.5 1073h1.75v29.0h-1.75zM28 1073h1.75v29.0h-1.75zM29.75 1073h1.75v29.0h-1.75zM31.5 1073h1.75v29.0h-1.75zM33.25 1073h1.75v29.0h-1.75zM50.75 1073h1.75v29.0h-1.75zM52.5 1073h1.75v29.0h-1.75zM54.25 1073h1.75v29.0h-1.75zM56 1073h1.75v29.0h-1.75zM57.75 1073h1.75v29.0h-1.75zM59.5 1073h1.75v29.0h-1.75zM77 1073h1.75v29.0h-1.75zM78.75 1073h1.75v29.0h-1.75zM80.5 1073h1.75v29.0h-1.75zM82.25 1073h1.75v29.0h-1.75zM84 1073h1.75v29.0h-1.75zM87.5 1073h1.75v29.0h-1.75zM103.25 1073h1.75v29.0h-1.75zM5.25 1102h1.75v29.0h-1.75zM35 1102h1.75v29.0h-1.75zM36.75 1102h1.75v29.0h-1.75zM38.5 1102h1.75v29.0h-1.75zM40.25 1102h1.75v29.0h-1.75zM49 1102h1.75v29.0h-1.75zM59.5 1131h1.75v29.0h-1.75zM64.75 1131h1.75v29.0h-1.75zM78.75 1131h1.75v29.0h-1.75zM80.5 1131h1.75v29.0h-1.75zM82.25 1131h1.75v29.0h-1.75zM84 1131h1.75v29.0h-1.75zM85.75 1131h1.75v29.0h-1.75zM96.25 1131h1.75v29.0h-1.75zM98 1131h1.75v29.0h-1.75zM99.75 1131h1.75v29.0h-1.75zM101.5 1131h1.75v29.0h-1.75zM103.25 1131h1.75v29.0h-1.75zM105 1131h1.75v29.0h-1.75zM106.75 1131h1.75v29.0h-1.75zM108.5 1131h1.75v29.0h-1.75zM7 1160h1.75v29.0h-1.75zM8.75 1160h1.75v29.0h-1.75zM10.5 1160h1.75v29.0h-1.75zM12.25 1160h1.75v29.0h-1.75zM14 1160h1.75v29.0h-1.75zM21 1160h1.75v29.0h-1.75zM22.75 1160h1.75v29.0h-1.75zM24.5 1160h1.75v29.0h-1.75zM26.25 1160h1.75v29.0h-1.75zM28 1160h1.75v29.0h-1.75zM70 1160h1.75v29.0h-1.75zM17.5 1189h1.75v29.0h-1.75zM84 1189h1.75v29.0h-1.75zM85.75 1189h1.75v29.0h-1.75zM103.25 1218h1.75v29.0h-1.75zM105 1218h1.75v29.0h-1.75zM0 1247h1.75v29.0h-1.75zM1.75 1247h1.75v29.0h-1.75zM28 1276h1.75v29.0h-1.75zM106.75 1276h1.75v29.0h-1.75zM108.5 1276h1.75v29.0h-1.75zM8.75 1305h1.75v29.0h-1.75zM10.5 1305h1.75v29.0h-1.75zM12.25 1305h1.75v29.0h-1.75zM96.25 1305h1.75v29.0h-1.75zM98 1305h1.75v29.0h-1.75zM103.25 1305h1.75v29.0h-1.75zM3.5 1334h1.75v29.0h-1.75zM5.25 1334h1.75v29.0h-1.75zM7 1334h1.75v29.0h-1.75zM8.75 1334h1.75v29.0h-1.75zM12.25 1334h1.75v29.0h-1.75zM45.5 1334h1.75v29.0h-1.75zM47.25 1334h1.75v29.0h-1.75zM49 1334h1.75v29.0h-1.75zM50.75 1334h1.75v29.0h-1.75zM63 1334h1.75v29.0h-1.75zM15.75 1363h1.75v29.0h-1.75zM17.5 1363h1.75v29.0h-1.75zM19.25 1363h1.75v29.0h-1.75zM26.25 1363h1.75v29.0h-1.75zM28 1363h1.75v29.0h-1.75zM38.5 1363h1.75v29.0h-1.75zM40.25 1363h1.75v29.0h-1.75zM42 1363h1.75v29.0h-1.75zM63 1363h1.75v29.0h-1.75zM64.75 1363h1.75v29.0h-1.75zM66.5 1363h1.75v29.0h-1.75zM87.5 1363h1.75v29.0h-1.75zM89.25 1363h1.75v29.0h-1.75zM91 1363h1.75v29.0h-1.75zM92.75 1363h1.75v29.0h-1.75zM94.5 1363h1.75v29.0h-1.75zM0 1392h1.75v29.0h-1.75zM40.25 1392h1.75v29.0h-1.75zM75.25 1392h1.75v29.0h-1.75zM77 1392h1.75v29.0h-1.75zM78.75 1392h1.75v29.0h-1.75zM80.5 1392h1.75v29.0h-1.75zM98 1392h1.75v29.0h-1.75zM99.75 1392h1.75v29.0h-1.75zM101.5 1392h1.75v29.0h-1.75zM82.25 1421h1.75v29.0h-1.75zM84 1421h1.75v29.0h-1.75zM7 1450h1.75v29.0h-1.75zM8.75 1450h1.75v29.0h-1.75zM10.5 1450h1.75v29.0h-1.75z"/>
</svg>
<div class="abs" style="left:2757px;top:85px;width:112px;height:174px;box-sizing:border-box;border-left:2px solid rgba(255,0,0,.5);border-right:2px solid rgba(255,0,0,.5)"></div>
<div class="abs" style="left:2757px;top:230px;width:112px;height:29px;background:#dd0000"></div>
<div class="abs mag" style="left:2717.5px;top:1594px">&lt;</div><div class="abs mag" style="left:2752.5px;top:1594px">Magnitude</div><div class="abs mag" style="left:2894.5px;top:1594px">&gt;</div>
<div id="ver" class="abs" style="left:2856px;top:1675px">v0.6.0</div>
</div></body></html>
